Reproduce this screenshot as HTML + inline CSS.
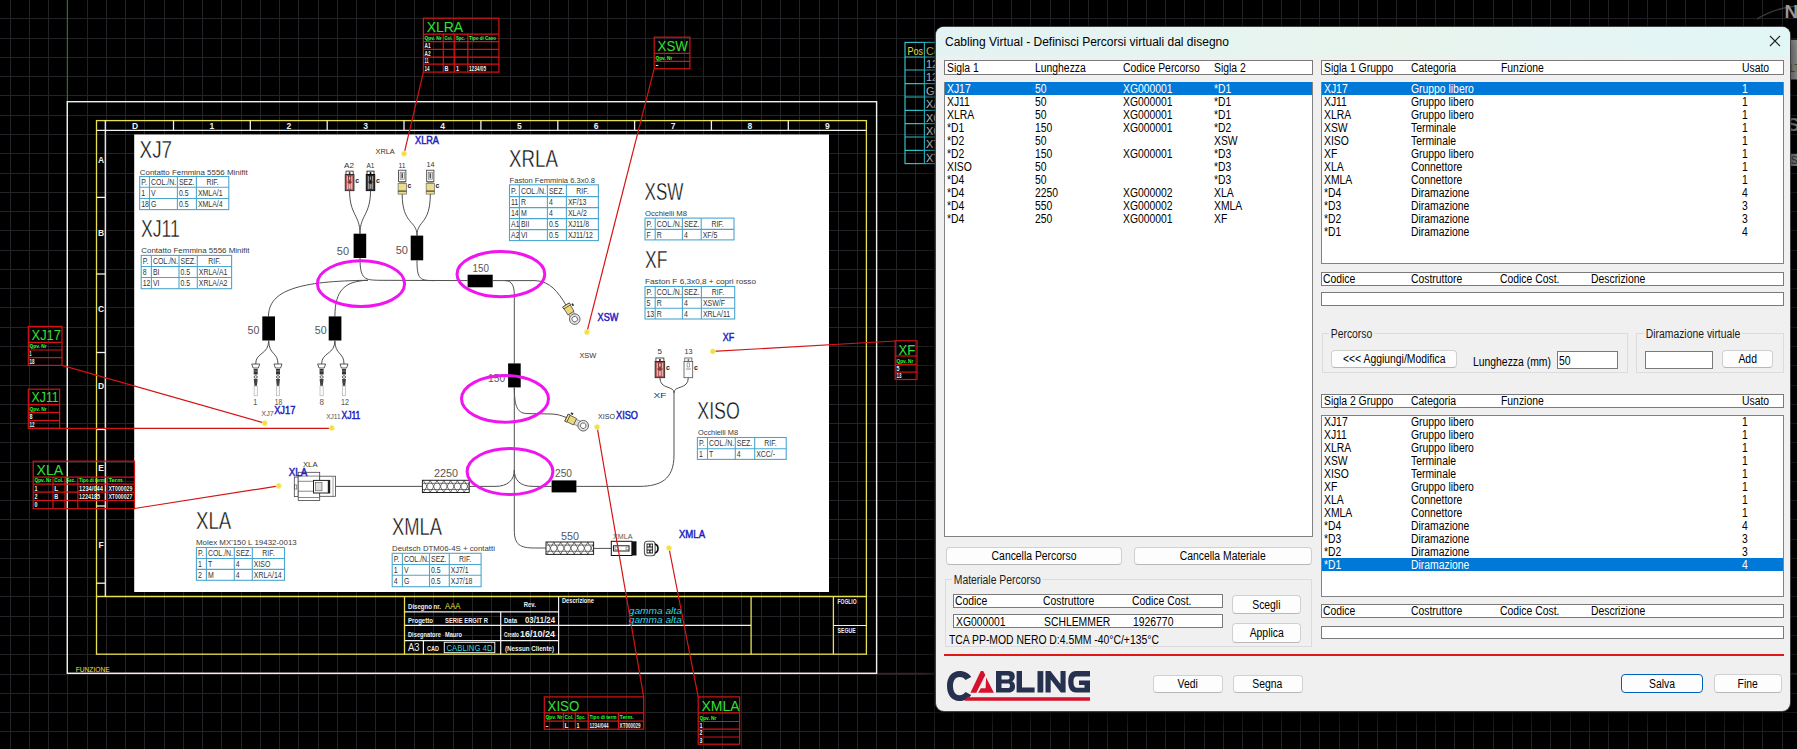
<!DOCTYPE html>
<html><head><meta charset="utf-8"><style>
html,body{margin:0;padding:0;width:1797px;height:749px;overflow:hidden;background:#000;position:relative}

.abs{position:absolute}
.dlg{position:absolute;left:936px;top:27px;width:854px;height:684px;background:#f0f0f0;border-radius:8px;box-shadow:0 0 0 1px #404040,0 6px 18px 4px rgba(0,0,0,.75)}
.title{position:absolute;left:936px;top:27px;width:854px;height:32px;border-radius:8px 8px 0 0;background:linear-gradient(90deg,#e3f3f3 0%,#e6f4f1 30%,#e9f4ed 55%,#e5f5f3 75%,#e1f6f6 100%)}
.title:after{content:'';position:absolute;left:0;right:0;bottom:0;height:4px;background:linear-gradient(180deg,rgba(240,240,240,0),#f0f0f0)}
.t,.tw{position:absolute;font-family:"Liberation Sans",sans-serif;font-size:12px;line-height:14px;white-space:nowrap;color:#000;transform:scaleX(.865);transform-origin:0 0}
.ttl{transform:none}
.tw{color:#fff}
.lbl{background:#f0f0f0;padding:0 2px;color:#1a1a1a}
.hdr,.lst,.edit{position:absolute;box-sizing:border-box;background:#fff;border:1px solid #7a7a7a}
.lst{border-color:#828282}
.sel{position:absolute;background:#0078d7}
.grp{position:absolute;box-sizing:border-box;border:1px solid #dcdcdc}
.btn{position:absolute;box-sizing:border-box;background:#fdfdfd;border:1px solid #d0d0d0;border-bottom-color:#b8b8b8;border-radius:4px;font-family:"Liberation Sans",sans-serif;font-size:12px;color:#000;display:flex;align-items:center;justify-content:center;white-space:nowrap}
.btn span{position:relative;top:0px;display:inline-block;transform:scaleX(.865)}
.def{border:1.5px solid #005fb8}
.redl{position:absolute;left:944px;top:654px;width:840px;height:2px;background:#e01818}

</style></head><body>
<svg width="1797" height="749" viewBox="0 0 1797 749" style="position:absolute;left:0;top:0"><line x1="10.5" y1="0.0" x2="10.5" y2="749.0" stroke="#232327" stroke-width="1" shape-rendering="crispEdges"/>
<line x1="29.5" y1="0.0" x2="29.5" y2="749.0" stroke="#232327" stroke-width="1" shape-rendering="crispEdges"/>
<line x1="48.5" y1="0.0" x2="48.5" y2="749.0" stroke="#232327" stroke-width="1" shape-rendering="crispEdges"/>
<line x1="67.5" y1="0.0" x2="67.5" y2="749.0" stroke="#232327" stroke-width="1" shape-rendering="crispEdges"/>
<line x1="87.5" y1="0.0" x2="87.5" y2="749.0" stroke="#232327" stroke-width="1" shape-rendering="crispEdges"/>
<line x1="106.5" y1="0.0" x2="106.5" y2="749.0" stroke="#232327" stroke-width="1" shape-rendering="crispEdges"/>
<line x1="125.5" y1="0.0" x2="125.5" y2="749.0" stroke="#232327" stroke-width="1" shape-rendering="crispEdges"/>
<line x1="144.5" y1="0.0" x2="144.5" y2="749.0" stroke="#232327" stroke-width="1" shape-rendering="crispEdges"/>
<line x1="164.5" y1="0.0" x2="164.5" y2="749.0" stroke="#232327" stroke-width="1" shape-rendering="crispEdges"/>
<line x1="183.5" y1="0.0" x2="183.5" y2="749.0" stroke="#232327" stroke-width="1" shape-rendering="crispEdges"/>
<line x1="202.5" y1="0.0" x2="202.5" y2="749.0" stroke="#232327" stroke-width="1" shape-rendering="crispEdges"/>
<line x1="221.5" y1="0.0" x2="221.5" y2="749.0" stroke="#232327" stroke-width="1" shape-rendering="crispEdges"/>
<line x1="241.5" y1="0.0" x2="241.5" y2="749.0" stroke="#232327" stroke-width="1" shape-rendering="crispEdges"/>
<line x1="260.5" y1="0.0" x2="260.5" y2="749.0" stroke="#232327" stroke-width="1" shape-rendering="crispEdges"/>
<line x1="279.5" y1="0.0" x2="279.5" y2="749.0" stroke="#232327" stroke-width="1" shape-rendering="crispEdges"/>
<line x1="298.5" y1="0.0" x2="298.5" y2="749.0" stroke="#232327" stroke-width="1" shape-rendering="crispEdges"/>
<line x1="318.5" y1="0.0" x2="318.5" y2="749.0" stroke="#232327" stroke-width="1" shape-rendering="crispEdges"/>
<line x1="337.5" y1="0.0" x2="337.5" y2="749.0" stroke="#232327" stroke-width="1" shape-rendering="crispEdges"/>
<line x1="356.5" y1="0.0" x2="356.5" y2="749.0" stroke="#232327" stroke-width="1" shape-rendering="crispEdges"/>
<line x1="375.5" y1="0.0" x2="375.5" y2="749.0" stroke="#232327" stroke-width="1" shape-rendering="crispEdges"/>
<line x1="395.5" y1="0.0" x2="395.5" y2="749.0" stroke="#232327" stroke-width="1" shape-rendering="crispEdges"/>
<line x1="414.5" y1="0.0" x2="414.5" y2="749.0" stroke="#232327" stroke-width="1" shape-rendering="crispEdges"/>
<line x1="433.5" y1="0.0" x2="433.5" y2="749.0" stroke="#232327" stroke-width="1" shape-rendering="crispEdges"/>
<line x1="453.5" y1="0.0" x2="453.5" y2="749.0" stroke="#232327" stroke-width="1" shape-rendering="crispEdges"/>
<line x1="472.5" y1="0.0" x2="472.5" y2="749.0" stroke="#232327" stroke-width="1" shape-rendering="crispEdges"/>
<line x1="491.5" y1="0.0" x2="491.5" y2="749.0" stroke="#232327" stroke-width="1" shape-rendering="crispEdges"/>
<line x1="510.5" y1="0.0" x2="510.5" y2="749.0" stroke="#232327" stroke-width="1" shape-rendering="crispEdges"/>
<line x1="530.5" y1="0.0" x2="530.5" y2="749.0" stroke="#232327" stroke-width="1" shape-rendering="crispEdges"/>
<line x1="549.5" y1="0.0" x2="549.5" y2="749.0" stroke="#232327" stroke-width="1" shape-rendering="crispEdges"/>
<line x1="568.5" y1="0.0" x2="568.5" y2="749.0" stroke="#232327" stroke-width="1" shape-rendering="crispEdges"/>
<line x1="587.5" y1="0.0" x2="587.5" y2="749.0" stroke="#232327" stroke-width="1" shape-rendering="crispEdges"/>
<line x1="607.5" y1="0.0" x2="607.5" y2="749.0" stroke="#232327" stroke-width="1" shape-rendering="crispEdges"/>
<line x1="626.5" y1="0.0" x2="626.5" y2="749.0" stroke="#232327" stroke-width="1" shape-rendering="crispEdges"/>
<line x1="645.5" y1="0.0" x2="645.5" y2="749.0" stroke="#232327" stroke-width="1" shape-rendering="crispEdges"/>
<line x1="664.5" y1="0.0" x2="664.5" y2="749.0" stroke="#232327" stroke-width="1" shape-rendering="crispEdges"/>
<line x1="684.5" y1="0.0" x2="684.5" y2="749.0" stroke="#232327" stroke-width="1" shape-rendering="crispEdges"/>
<line x1="703.5" y1="0.0" x2="703.5" y2="749.0" stroke="#232327" stroke-width="1" shape-rendering="crispEdges"/>
<line x1="722.5" y1="0.0" x2="722.5" y2="749.0" stroke="#232327" stroke-width="1" shape-rendering="crispEdges"/>
<line x1="741.5" y1="0.0" x2="741.5" y2="749.0" stroke="#232327" stroke-width="1" shape-rendering="crispEdges"/>
<line x1="761.5" y1="0.0" x2="761.5" y2="749.0" stroke="#232327" stroke-width="1" shape-rendering="crispEdges"/>
<line x1="780.5" y1="0.0" x2="780.5" y2="749.0" stroke="#232327" stroke-width="1" shape-rendering="crispEdges"/>
<line x1="799.5" y1="0.0" x2="799.5" y2="749.0" stroke="#232327" stroke-width="1" shape-rendering="crispEdges"/>
<line x1="819.5" y1="0.0" x2="819.5" y2="749.0" stroke="#232327" stroke-width="1" shape-rendering="crispEdges"/>
<line x1="838.5" y1="0.0" x2="838.5" y2="749.0" stroke="#232327" stroke-width="1" shape-rendering="crispEdges"/>
<line x1="857.5" y1="0.0" x2="857.5" y2="749.0" stroke="#232327" stroke-width="1" shape-rendering="crispEdges"/>
<line x1="876.5" y1="0.0" x2="876.5" y2="749.0" stroke="#232327" stroke-width="1" shape-rendering="crispEdges"/>
<line x1="896.5" y1="0.0" x2="896.5" y2="749.0" stroke="#232327" stroke-width="1" shape-rendering="crispEdges"/>
<line x1="915.5" y1="0.0" x2="915.5" y2="749.0" stroke="#232327" stroke-width="1" shape-rendering="crispEdges"/>
<line x1="934.5" y1="0.0" x2="934.5" y2="749.0" stroke="#232327" stroke-width="1" shape-rendering="crispEdges"/>
<line x1="953.5" y1="0.0" x2="953.5" y2="749.0" stroke="#232327" stroke-width="1" shape-rendering="crispEdges"/>
<line x1="973.5" y1="0.0" x2="973.5" y2="749.0" stroke="#232327" stroke-width="1" shape-rendering="crispEdges"/>
<line x1="992.5" y1="0.0" x2="992.5" y2="749.0" stroke="#232327" stroke-width="1" shape-rendering="crispEdges"/>
<line x1="1011.5" y1="0.0" x2="1011.5" y2="749.0" stroke="#232327" stroke-width="1" shape-rendering="crispEdges"/>
<line x1="1030.5" y1="0.0" x2="1030.5" y2="749.0" stroke="#232327" stroke-width="1" shape-rendering="crispEdges"/>
<line x1="1050.5" y1="0.0" x2="1050.5" y2="749.0" stroke="#232327" stroke-width="1" shape-rendering="crispEdges"/>
<line x1="1069.5" y1="0.0" x2="1069.5" y2="749.0" stroke="#232327" stroke-width="1" shape-rendering="crispEdges"/>
<line x1="1088.5" y1="0.0" x2="1088.5" y2="749.0" stroke="#232327" stroke-width="1" shape-rendering="crispEdges"/>
<line x1="1107.5" y1="0.0" x2="1107.5" y2="749.0" stroke="#232327" stroke-width="1" shape-rendering="crispEdges"/>
<line x1="1127.5" y1="0.0" x2="1127.5" y2="749.0" stroke="#232327" stroke-width="1" shape-rendering="crispEdges"/>
<line x1="1146.5" y1="0.0" x2="1146.5" y2="749.0" stroke="#232327" stroke-width="1" shape-rendering="crispEdges"/>
<line x1="1165.5" y1="0.0" x2="1165.5" y2="749.0" stroke="#232327" stroke-width="1" shape-rendering="crispEdges"/>
<line x1="1184.5" y1="0.0" x2="1184.5" y2="749.0" stroke="#232327" stroke-width="1" shape-rendering="crispEdges"/>
<line x1="1204.5" y1="0.0" x2="1204.5" y2="749.0" stroke="#232327" stroke-width="1" shape-rendering="crispEdges"/>
<line x1="1223.5" y1="0.0" x2="1223.5" y2="749.0" stroke="#232327" stroke-width="1" shape-rendering="crispEdges"/>
<line x1="1242.5" y1="0.0" x2="1242.5" y2="749.0" stroke="#232327" stroke-width="1" shape-rendering="crispEdges"/>
<line x1="1262.5" y1="0.0" x2="1262.5" y2="749.0" stroke="#232327" stroke-width="1" shape-rendering="crispEdges"/>
<line x1="1281.5" y1="0.0" x2="1281.5" y2="749.0" stroke="#232327" stroke-width="1" shape-rendering="crispEdges"/>
<line x1="1300.5" y1="0.0" x2="1300.5" y2="749.0" stroke="#232327" stroke-width="1" shape-rendering="crispEdges"/>
<line x1="1319.5" y1="0.0" x2="1319.5" y2="749.0" stroke="#232327" stroke-width="1" shape-rendering="crispEdges"/>
<line x1="1339.5" y1="0.0" x2="1339.5" y2="749.0" stroke="#232327" stroke-width="1" shape-rendering="crispEdges"/>
<line x1="1358.5" y1="0.0" x2="1358.5" y2="749.0" stroke="#232327" stroke-width="1" shape-rendering="crispEdges"/>
<line x1="1377.5" y1="0.0" x2="1377.5" y2="749.0" stroke="#232327" stroke-width="1" shape-rendering="crispEdges"/>
<line x1="1396.5" y1="0.0" x2="1396.5" y2="749.0" stroke="#232327" stroke-width="1" shape-rendering="crispEdges"/>
<line x1="1416.5" y1="0.0" x2="1416.5" y2="749.0" stroke="#232327" stroke-width="1" shape-rendering="crispEdges"/>
<line x1="1435.5" y1="0.0" x2="1435.5" y2="749.0" stroke="#232327" stroke-width="1" shape-rendering="crispEdges"/>
<line x1="1454.5" y1="0.0" x2="1454.5" y2="749.0" stroke="#232327" stroke-width="1" shape-rendering="crispEdges"/>
<line x1="1473.5" y1="0.0" x2="1473.5" y2="749.0" stroke="#232327" stroke-width="1" shape-rendering="crispEdges"/>
<line x1="1493.5" y1="0.0" x2="1493.5" y2="749.0" stroke="#232327" stroke-width="1" shape-rendering="crispEdges"/>
<line x1="1512.5" y1="0.0" x2="1512.5" y2="749.0" stroke="#232327" stroke-width="1" shape-rendering="crispEdges"/>
<line x1="1531.5" y1="0.0" x2="1531.5" y2="749.0" stroke="#232327" stroke-width="1" shape-rendering="crispEdges"/>
<line x1="1550.5" y1="0.0" x2="1550.5" y2="749.0" stroke="#232327" stroke-width="1" shape-rendering="crispEdges"/>
<line x1="1570.5" y1="0.0" x2="1570.5" y2="749.0" stroke="#232327" stroke-width="1" shape-rendering="crispEdges"/>
<line x1="1589.5" y1="0.0" x2="1589.5" y2="749.0" stroke="#232327" stroke-width="1" shape-rendering="crispEdges"/>
<line x1="1608.5" y1="0.0" x2="1608.5" y2="749.0" stroke="#232327" stroke-width="1" shape-rendering="crispEdges"/>
<line x1="1628.5" y1="0.0" x2="1628.5" y2="749.0" stroke="#232327" stroke-width="1" shape-rendering="crispEdges"/>
<line x1="1647.5" y1="0.0" x2="1647.5" y2="749.0" stroke="#232327" stroke-width="1" shape-rendering="crispEdges"/>
<line x1="1666.5" y1="0.0" x2="1666.5" y2="749.0" stroke="#232327" stroke-width="1" shape-rendering="crispEdges"/>
<line x1="1685.5" y1="0.0" x2="1685.5" y2="749.0" stroke="#232327" stroke-width="1" shape-rendering="crispEdges"/>
<line x1="1705.5" y1="0.0" x2="1705.5" y2="749.0" stroke="#232327" stroke-width="1" shape-rendering="crispEdges"/>
<line x1="1724.5" y1="0.0" x2="1724.5" y2="749.0" stroke="#232327" stroke-width="1" shape-rendering="crispEdges"/>
<line x1="1743.5" y1="0.0" x2="1743.5" y2="749.0" stroke="#232327" stroke-width="1" shape-rendering="crispEdges"/>
<line x1="1762.5" y1="0.0" x2="1762.5" y2="749.0" stroke="#232327" stroke-width="1" shape-rendering="crispEdges"/>
<line x1="1782.5" y1="0.0" x2="1782.5" y2="749.0" stroke="#232327" stroke-width="1" shape-rendering="crispEdges"/>
<line x1="0.0" y1="18.5" x2="1797.0" y2="18.5" stroke="#232327" stroke-width="1" shape-rendering="crispEdges"/>
<line x1="0.0" y1="38.5" x2="1797.0" y2="38.5" stroke="#232327" stroke-width="1" shape-rendering="crispEdges"/>
<line x1="0.0" y1="57.5" x2="1797.0" y2="57.5" stroke="#232327" stroke-width="1" shape-rendering="crispEdges"/>
<line x1="0.0" y1="76.5" x2="1797.0" y2="76.5" stroke="#232327" stroke-width="1" shape-rendering="crispEdges"/>
<line x1="0.0" y1="95.5" x2="1797.0" y2="95.5" stroke="#232327" stroke-width="1" shape-rendering="crispEdges"/>
<line x1="0.0" y1="115.5" x2="1797.0" y2="115.5" stroke="#232327" stroke-width="1" shape-rendering="crispEdges"/>
<line x1="0.0" y1="134.5" x2="1797.0" y2="134.5" stroke="#232327" stroke-width="1" shape-rendering="crispEdges"/>
<line x1="0.0" y1="153.5" x2="1797.0" y2="153.5" stroke="#232327" stroke-width="1" shape-rendering="crispEdges"/>
<line x1="0.0" y1="173.5" x2="1797.0" y2="173.5" stroke="#232327" stroke-width="1" shape-rendering="crispEdges"/>
<line x1="0.0" y1="192.5" x2="1797.0" y2="192.5" stroke="#232327" stroke-width="1" shape-rendering="crispEdges"/>
<line x1="0.0" y1="211.5" x2="1797.0" y2="211.5" stroke="#232327" stroke-width="1" shape-rendering="crispEdges"/>
<line x1="0.0" y1="230.5" x2="1797.0" y2="230.5" stroke="#232327" stroke-width="1" shape-rendering="crispEdges"/>
<line x1="0.0" y1="250.5" x2="1797.0" y2="250.5" stroke="#232327" stroke-width="1" shape-rendering="crispEdges"/>
<line x1="0.0" y1="269.5" x2="1797.0" y2="269.5" stroke="#232327" stroke-width="1" shape-rendering="crispEdges"/>
<line x1="0.0" y1="288.5" x2="1797.0" y2="288.5" stroke="#232327" stroke-width="1" shape-rendering="crispEdges"/>
<line x1="0.0" y1="307.5" x2="1797.0" y2="307.5" stroke="#232327" stroke-width="1" shape-rendering="crispEdges"/>
<line x1="0.0" y1="327.5" x2="1797.0" y2="327.5" stroke="#232327" stroke-width="1" shape-rendering="crispEdges"/>
<line x1="0.0" y1="346.5" x2="1797.0" y2="346.5" stroke="#232327" stroke-width="1" shape-rendering="crispEdges"/>
<line x1="0.0" y1="365.5" x2="1797.0" y2="365.5" stroke="#232327" stroke-width="1" shape-rendering="crispEdges"/>
<line x1="0.0" y1="385.5" x2="1797.0" y2="385.5" stroke="#232327" stroke-width="1" shape-rendering="crispEdges"/>
<line x1="0.0" y1="404.5" x2="1797.0" y2="404.5" stroke="#232327" stroke-width="1" shape-rendering="crispEdges"/>
<line x1="0.0" y1="423.5" x2="1797.0" y2="423.5" stroke="#232327" stroke-width="1" shape-rendering="crispEdges"/>
<line x1="0.0" y1="442.5" x2="1797.0" y2="442.5" stroke="#232327" stroke-width="1" shape-rendering="crispEdges"/>
<line x1="0.0" y1="462.5" x2="1797.0" y2="462.5" stroke="#232327" stroke-width="1" shape-rendering="crispEdges"/>
<line x1="0.0" y1="481.5" x2="1797.0" y2="481.5" stroke="#232327" stroke-width="1" shape-rendering="crispEdges"/>
<line x1="0.0" y1="500.5" x2="1797.0" y2="500.5" stroke="#232327" stroke-width="1" shape-rendering="crispEdges"/>
<line x1="0.0" y1="519.5" x2="1797.0" y2="519.5" stroke="#232327" stroke-width="1" shape-rendering="crispEdges"/>
<line x1="0.0" y1="539.5" x2="1797.0" y2="539.5" stroke="#232327" stroke-width="1" shape-rendering="crispEdges"/>
<line x1="0.0" y1="558.5" x2="1797.0" y2="558.5" stroke="#232327" stroke-width="1" shape-rendering="crispEdges"/>
<line x1="0.0" y1="577.5" x2="1797.0" y2="577.5" stroke="#232327" stroke-width="1" shape-rendering="crispEdges"/>
<line x1="0.0" y1="596.5" x2="1797.0" y2="596.5" stroke="#232327" stroke-width="1" shape-rendering="crispEdges"/>
<line x1="0.0" y1="616.5" x2="1797.0" y2="616.5" stroke="#232327" stroke-width="1" shape-rendering="crispEdges"/>
<line x1="0.0" y1="635.5" x2="1797.0" y2="635.5" stroke="#232327" stroke-width="1" shape-rendering="crispEdges"/>
<line x1="0.0" y1="654.5" x2="1797.0" y2="654.5" stroke="#232327" stroke-width="1" shape-rendering="crispEdges"/>
<line x1="0.0" y1="674.5" x2="1797.0" y2="674.5" stroke="#232327" stroke-width="1" shape-rendering="crispEdges"/>
<line x1="0.0" y1="693.5" x2="1797.0" y2="693.5" stroke="#232327" stroke-width="1" shape-rendering="crispEdges"/>
<line x1="0.0" y1="712.5" x2="1797.0" y2="712.5" stroke="#232327" stroke-width="1" shape-rendering="crispEdges"/>
<line x1="0.0" y1="731.5" x2="1797.0" y2="731.5" stroke="#232327" stroke-width="1" shape-rendering="crispEdges"/>
<line x1="67.3" y1="0.0" x2="67.3" y2="673.3" stroke="#3a7a3a" stroke-width="1" />
<line x1="67.3" y1="673.3" x2="1797.0" y2="673.3" stroke="#6a2020" stroke-width="1" />
<rect x="67.3" y="101.7" width="809.3" height="571.6" fill="none" stroke="#f0f0f0" stroke-width="1.4" />
<rect x="96.5" y="120.6" width="769.9" height="533.6" fill="none" stroke="#e8e050" stroke-width="1.3" />
<line x1="96.5" y1="596.5" x2="866.4" y2="596.5" stroke="#e8e050" stroke-width="1.3" />
<line x1="96.5" y1="130.3" x2="866.4" y2="130.3" stroke="#f0f0f0" stroke-width="1.3" />
<line x1="105.3" y1="120.6" x2="105.3" y2="596.5" stroke="#f0f0f0" stroke-width="1.3" />
<line x1="173.5" y1="120.6" x2="173.5" y2="130.3" stroke="#f0f0f0" stroke-width="1.3" />
<line x1="250.3" y1="120.6" x2="250.3" y2="130.3" stroke="#f0f0f0" stroke-width="1.3" />
<line x1="327.2" y1="120.6" x2="327.2" y2="130.3" stroke="#f0f0f0" stroke-width="1.3" />
<line x1="404.0" y1="120.6" x2="404.0" y2="130.3" stroke="#f0f0f0" stroke-width="1.3" />
<line x1="480.9" y1="120.6" x2="480.9" y2="130.3" stroke="#f0f0f0" stroke-width="1.3" />
<line x1="557.8" y1="120.6" x2="557.8" y2="130.3" stroke="#f0f0f0" stroke-width="1.3" />
<line x1="634.6" y1="120.6" x2="634.6" y2="130.3" stroke="#f0f0f0" stroke-width="1.3" />
<line x1="711.4" y1="120.6" x2="711.4" y2="130.3" stroke="#f0f0f0" stroke-width="1.3" />
<line x1="788.3" y1="120.6" x2="788.3" y2="130.3" stroke="#f0f0f0" stroke-width="1.3" />
<text x="135.0" y="128.6" font-family='"Liberation Sans", sans-serif' font-size="8.5" fill="#f0f0f0" font-weight="bold" text-anchor="middle" >D</text>
<text x="211.9" y="128.6" font-family='"Liberation Sans", sans-serif' font-size="8.5" fill="#f0f0f0" font-weight="bold" text-anchor="middle" >1</text>
<text x="288.8" y="128.6" font-family='"Liberation Sans", sans-serif' font-size="8.5" fill="#f0f0f0" font-weight="bold" text-anchor="middle" >2</text>
<text x="365.6" y="128.6" font-family='"Liberation Sans", sans-serif' font-size="8.5" fill="#f0f0f0" font-weight="bold" text-anchor="middle" >3</text>
<text x="442.5" y="128.6" font-family='"Liberation Sans", sans-serif' font-size="8.5" fill="#f0f0f0" font-weight="bold" text-anchor="middle" >4</text>
<text x="519.3" y="128.6" font-family='"Liberation Sans", sans-serif' font-size="8.5" fill="#f0f0f0" font-weight="bold" text-anchor="middle" >5</text>
<text x="596.2" y="128.6" font-family='"Liberation Sans", sans-serif' font-size="8.5" fill="#f0f0f0" font-weight="bold" text-anchor="middle" >6</text>
<text x="673.0" y="128.6" font-family='"Liberation Sans", sans-serif' font-size="8.5" fill="#f0f0f0" font-weight="bold" text-anchor="middle" >7</text>
<text x="749.9" y="128.6" font-family='"Liberation Sans", sans-serif' font-size="8.5" fill="#f0f0f0" font-weight="bold" text-anchor="middle" >8</text>
<text x="827.3" y="128.6" font-family='"Liberation Sans", sans-serif' font-size="8.5" fill="#f0f0f0" font-weight="bold" text-anchor="middle" >9</text>
<line x1="96.5" y1="197.4" x2="105.3" y2="197.4" stroke="#f0f0f0" stroke-width="1.3" />
<line x1="96.5" y1="274.0" x2="105.3" y2="274.0" stroke="#f0f0f0" stroke-width="1.3" />
<line x1="96.5" y1="352.5" x2="105.3" y2="352.5" stroke="#f0f0f0" stroke-width="1.3" />
<line x1="96.5" y1="429.5" x2="105.3" y2="429.5" stroke="#f0f0f0" stroke-width="1.3" />
<line x1="96.5" y1="506.0" x2="105.3" y2="506.0" stroke="#f0f0f0" stroke-width="1.3" />
<line x1="96.5" y1="583.2" x2="105.3" y2="583.2" stroke="#f0f0f0" stroke-width="1.3" />
<text x="101.0" y="162.7" font-family='"Liberation Sans", sans-serif' font-size="8.5" fill="#f0f0f0" font-weight="bold" text-anchor="middle" >A</text>
<text x="101.0" y="236.2" font-family='"Liberation Sans", sans-serif' font-size="8.5" fill="#f0f0f0" font-weight="bold" text-anchor="middle" >B</text>
<text x="101.0" y="312.2" font-family='"Liberation Sans", sans-serif' font-size="8.5" fill="#f0f0f0" font-weight="bold" text-anchor="middle" >C</text>
<text x="101.0" y="389.2" font-family='"Liberation Sans", sans-serif' font-size="8.5" fill="#f0f0f0" font-weight="bold" text-anchor="middle" >D</text>
<text x="101.0" y="471.2" font-family='"Liberation Sans", sans-serif' font-size="8.5" fill="#f0f0f0" font-weight="bold" text-anchor="middle" >E</text>
<text x="101.0" y="548.2" font-family='"Liberation Sans", sans-serif' font-size="8.5" fill="#f0f0f0" font-weight="bold" text-anchor="middle" >F</text>
<text x="75.7" y="672.3" font-family='"Liberation Sans", sans-serif' font-size="7.5" fill="#e8e050" font-weight="normal" text-anchor="start" textLength="34.0" lengthAdjust="spacingAndGlyphs" >FUNZIONE</text>
<rect x="134.2" y="134.5" width="694.8" height="457.5" fill="#ffffff" />
<line x1="404.5" y1="596.5" x2="404.5" y2="654.2" stroke="#e8e050" stroke-width="1.3" />
<line x1="751.1" y1="596.5" x2="751.1" y2="654.2" stroke="#e8e050" stroke-width="1.3" />
<line x1="833.4" y1="596.5" x2="833.4" y2="654.2" stroke="#e8e050" stroke-width="1.3" />
<line x1="404.5" y1="611.8" x2="558.6" y2="611.8" stroke="#f0f0f0" stroke-width="1.2" />
<line x1="404.5" y1="625.4" x2="751.1" y2="625.4" stroke="#f0f0f0" stroke-width="1.2" />
<line x1="404.5" y1="640.7" x2="558.6" y2="640.7" stroke="#f0f0f0" stroke-width="1.2" />
<line x1="500.7" y1="611.8" x2="500.7" y2="654.2" stroke="#f0f0f0" stroke-width="1.2" />
<line x1="558.6" y1="596.5" x2="558.6" y2="654.2" stroke="#f0f0f0" stroke-width="1.2" />
<line x1="423.4" y1="640.7" x2="423.4" y2="654.2" stroke="#f0f0f0" stroke-width="1.2" />
<line x1="833.4" y1="625.5" x2="866.4" y2="625.5" stroke="#f0f0f0" stroke-width="1.2" />
<text x="408.0" y="609.3" font-family='"Liberation Sans", sans-serif' font-size="7" fill="#f0f0f0" font-weight="bold" text-anchor="start" textLength="33.0" lengthAdjust="spacingAndGlyphs" >Disegno nr.</text>
<text x="445.0" y="609.3" font-family='"Liberation Sans", sans-serif' font-size="9.5" fill="#e8e050" font-weight="normal" text-anchor="start" textLength="15.5" lengthAdjust="spacingAndGlyphs" >AAA</text>
<text x="523.8" y="607.0" font-family='"Liberation Sans", sans-serif' font-size="7" fill="#f0f0f0" font-weight="bold" text-anchor="start" textLength="12.0" lengthAdjust="spacingAndGlyphs" >Rev.</text>
<text x="408.0" y="622.6" font-family='"Liberation Sans", sans-serif' font-size="7" fill="#f0f0f0" font-weight="bold" text-anchor="start" textLength="25.0" lengthAdjust="spacingAndGlyphs" >Progetto</text>
<text x="445.0" y="622.6" font-family='"Liberation Sans", sans-serif' font-size="8" fill="#f0f0f0" font-weight="bold" text-anchor="start" textLength="43.0" lengthAdjust="spacingAndGlyphs" >SERIE ERGIT R</text>
<text x="504.0" y="622.6" font-family='"Liberation Sans", sans-serif' font-size="7" fill="#f0f0f0" font-weight="bold" text-anchor="start" textLength="13.0" lengthAdjust="spacingAndGlyphs" >Data</text>
<text x="525.0" y="622.6" font-family='"Liberation Sans", sans-serif' font-size="9" fill="#f0f0f0" font-weight="bold" text-anchor="start" textLength="30.0" lengthAdjust="spacingAndGlyphs" >03/11/24</text>
<text x="408.0" y="636.8" font-family='"Liberation Sans", sans-serif' font-size="7" fill="#f0f0f0" font-weight="bold" text-anchor="start" textLength="33.0" lengthAdjust="spacingAndGlyphs" >Disegnatore</text>
<text x="445.0" y="636.8" font-family='"Liberation Sans", sans-serif' font-size="8" fill="#f0f0f0" font-weight="bold" text-anchor="start" textLength="17.0" lengthAdjust="spacingAndGlyphs" >Mauro</text>
<text x="504.0" y="636.8" font-family='"Liberation Sans", sans-serif' font-size="7" fill="#f0f0f0" font-weight="bold" text-anchor="start" textLength="15.0" lengthAdjust="spacingAndGlyphs" >Creato</text>
<text x="520.0" y="636.8" font-family='"Liberation Sans", sans-serif' font-size="9" fill="#f0f0f0" font-weight="bold" text-anchor="start" textLength="35.0" lengthAdjust="spacingAndGlyphs" >16/10/24</text>
<text x="408.0" y="650.8" font-family='"Liberation Sans", sans-serif' font-size="10" fill="#f0f0f0" font-weight="normal" text-anchor="start" textLength="11.5" lengthAdjust="spacingAndGlyphs" >A3</text>
<text x="427.0" y="651.0" font-family='"Liberation Sans", sans-serif' font-size="6.5" fill="#f0f0f0" font-weight="bold" text-anchor="start" textLength="12.0" lengthAdjust="spacingAndGlyphs" >CAD</text>
<rect x="444.3" y="642.3" width="50.5" height="10.4" fill="none" stroke="#f0f0f0" stroke-width="1" />
<text x="446.5" y="651.2" font-family='"Liberation Sans", sans-serif' font-size="9" fill="#30d8e0" font-weight="normal" text-anchor="start" textLength="46.0" lengthAdjust="spacingAndGlyphs" >CABLING 4D</text>
<text x="505.0" y="650.5" font-family='"Liberation Sans", sans-serif' font-size="8" fill="#f0f0f0" font-weight="bold" text-anchor="start" textLength="49.0" lengthAdjust="spacingAndGlyphs" >(Nessun Cliente)</text>
<text x="562.0" y="602.5" font-family='"Liberation Sans", sans-serif' font-size="6.5" fill="#f0f0f0" font-weight="bold" text-anchor="start" textLength="32.0" lengthAdjust="spacingAndGlyphs" >Descrizione</text>
<text x="628.8" y="613.8" font-family='"Liberation Sans", sans-serif' font-size="9" fill="#30d8e0" font-weight="normal" text-anchor="start" textLength="53.0" lengthAdjust="spacingAndGlyphs" font-style="italic">gamma  alta</text>
<text x="628.8" y="622.7" font-family='"Liberation Sans", sans-serif' font-size="9" fill="#30d8e0" font-weight="normal" text-anchor="start" textLength="53.0" lengthAdjust="spacingAndGlyphs" font-style="italic">gamma  alta</text>
<text x="837.6" y="603.7" font-family='"Liberation Sans", sans-serif' font-size="6.5" fill="#f0f0f0" font-weight="bold" text-anchor="start" textLength="19.0" lengthAdjust="spacingAndGlyphs" >FOGLIO</text>
<text x="837.6" y="632.8" font-family='"Liberation Sans", sans-serif' font-size="6.5" fill="#f0f0f0" font-weight="bold" text-anchor="start" textLength="18.0" lengthAdjust="spacingAndGlyphs" >SEGUE</text>
<text x="139.6" y="158.4" font-family='"Liberation Sans", sans-serif' font-size="23" fill="#111111" font-weight="normal" text-anchor="start" textLength="32.4" lengthAdjust="spacingAndGlyphs" stroke="#fff" stroke-width="0.35">XJ7</text>
<text x="139.8" y="174.8" font-family='"Liberation Sans", sans-serif' font-size="8" fill="#3a3a3a" font-weight="normal" text-anchor="start" textLength="107.8" lengthAdjust="spacingAndGlyphs" >Contatto Femmina 5556 Minifit</text>
<rect x="139.7" y="176.5" width="89.1" height="33.1" fill="none" stroke="#4aa6d0" stroke-width="1.1" />
<line x1="149.5" y1="176.5" x2="149.5" y2="209.6" stroke="#4aa6d0" stroke-width="1.1" />
<line x1="177.4" y1="176.5" x2="177.4" y2="209.6" stroke="#4aa6d0" stroke-width="1.1" />
<line x1="196.4" y1="176.5" x2="196.4" y2="209.6" stroke="#4aa6d0" stroke-width="1.1" />
<line x1="139.7" y1="187.3" x2="228.8" y2="187.3" stroke="#4aa6d0" stroke-width="1.1" />
<line x1="139.7" y1="198.5" x2="228.8" y2="198.5" stroke="#4aa6d0" stroke-width="1.1" />
<text x="141.2" y="185.1" font-family='"Liberation Sans", sans-serif' font-size="8.2" fill="#333" font-weight="normal" text-anchor="start" transform-origin="141.2 187.3" transform="scale(0.85 1)">P.</text>
<text x="151.0" y="185.1" font-family='"Liberation Sans", sans-serif' font-size="8.2" fill="#333" font-weight="normal" text-anchor="start" transform-origin="151.0 187.3" transform="scale(0.85 1)">COL./N.</text>
<text x="178.9" y="185.1" font-family='"Liberation Sans", sans-serif' font-size="8.2" fill="#333" font-weight="normal" text-anchor="start" transform-origin="178.9 187.3" transform="scale(0.85 1)">SEZ.</text>
<text x="212.6" y="185.1" font-family='"Liberation Sans", sans-serif' font-size="8.2" fill="#333" font-weight="normal" text-anchor="middle" transform-origin="212.6 187.3" transform="scale(0.85 1)">RIF.</text>
<text x="141.2" y="196.3" font-family='"Liberation Sans", sans-serif' font-size="8.2" fill="#333" font-weight="normal" text-anchor="start" transform-origin="141.2 198.5" transform="scale(0.85 1)">1</text>
<text x="151.0" y="196.3" font-family='"Liberation Sans", sans-serif' font-size="8.2" fill="#333" font-weight="normal" text-anchor="start" transform-origin="151.0 198.5" transform="scale(0.85 1)">V</text>
<text x="178.9" y="196.3" font-family='"Liberation Sans", sans-serif' font-size="8.2" fill="#333" font-weight="normal" text-anchor="start" transform-origin="178.9 198.5" transform="scale(0.85 1)">0.5</text>
<text x="197.9" y="196.3" font-family='"Liberation Sans", sans-serif' font-size="8.2" fill="#333" font-weight="normal" text-anchor="start" transform-origin="197.9 198.5" transform="scale(0.85 1)">XMLA/1</text>
<text x="141.2" y="207.4" font-family='"Liberation Sans", sans-serif' font-size="8.2" fill="#333" font-weight="normal" text-anchor="start" transform-origin="141.2 209.6" transform="scale(0.85 1)">18</text>
<text x="151.0" y="207.4" font-family='"Liberation Sans", sans-serif' font-size="8.2" fill="#333" font-weight="normal" text-anchor="start" transform-origin="151.0 209.6" transform="scale(0.85 1)">G</text>
<text x="178.9" y="207.4" font-family='"Liberation Sans", sans-serif' font-size="8.2" fill="#333" font-weight="normal" text-anchor="start" transform-origin="178.9 209.6" transform="scale(0.85 1)">0.5</text>
<text x="197.9" y="207.4" font-family='"Liberation Sans", sans-serif' font-size="8.2" fill="#333" font-weight="normal" text-anchor="start" transform-origin="197.9 209.6" transform="scale(0.85 1)">XMLA/4</text>
<text x="141.0" y="237.4" font-family='"Liberation Sans", sans-serif' font-size="23" fill="#111111" font-weight="normal" text-anchor="start" textLength="38.9" lengthAdjust="spacingAndGlyphs" stroke="#fff" stroke-width="0.35">XJ11</text>
<text x="141.3" y="253.3" font-family='"Liberation Sans", sans-serif' font-size="8" fill="#3a3a3a" font-weight="normal" text-anchor="start" textLength="108.1" lengthAdjust="spacingAndGlyphs" >Contatto Femmina 5556 Minifit</text>
<rect x="141.2" y="255.4" width="90.4" height="33.3" fill="none" stroke="#4aa6d0" stroke-width="1.1" />
<line x1="151.4" y1="255.4" x2="151.4" y2="288.7" stroke="#4aa6d0" stroke-width="1.1" />
<line x1="179.0" y1="255.4" x2="179.0" y2="288.7" stroke="#4aa6d0" stroke-width="1.1" />
<line x1="197.3" y1="255.4" x2="197.3" y2="288.7" stroke="#4aa6d0" stroke-width="1.1" />
<line x1="141.2" y1="266.5" x2="231.6" y2="266.5" stroke="#4aa6d0" stroke-width="1.1" />
<line x1="141.2" y1="277.5" x2="231.6" y2="277.5" stroke="#4aa6d0" stroke-width="1.1" />
<text x="142.7" y="264.3" font-family='"Liberation Sans", sans-serif' font-size="8.2" fill="#333" font-weight="normal" text-anchor="start" transform-origin="142.7 266.5" transform="scale(0.85 1)">P.</text>
<text x="152.9" y="264.3" font-family='"Liberation Sans", sans-serif' font-size="8.2" fill="#333" font-weight="normal" text-anchor="start" transform-origin="152.9 266.5" transform="scale(0.85 1)">COL./N.</text>
<text x="180.5" y="264.3" font-family='"Liberation Sans", sans-serif' font-size="8.2" fill="#333" font-weight="normal" text-anchor="start" transform-origin="180.5 266.5" transform="scale(0.85 1)">SEZ.</text>
<text x="214.4" y="264.3" font-family='"Liberation Sans", sans-serif' font-size="8.2" fill="#333" font-weight="normal" text-anchor="middle" transform-origin="214.4 266.5" transform="scale(0.85 1)">RIF.</text>
<text x="142.7" y="275.3" font-family='"Liberation Sans", sans-serif' font-size="8.2" fill="#333" font-weight="normal" text-anchor="start" transform-origin="142.7 277.5" transform="scale(0.85 1)">8</text>
<text x="152.9" y="275.3" font-family='"Liberation Sans", sans-serif' font-size="8.2" fill="#333" font-weight="normal" text-anchor="start" transform-origin="152.9 277.5" transform="scale(0.85 1)">BI</text>
<text x="180.5" y="275.3" font-family='"Liberation Sans", sans-serif' font-size="8.2" fill="#333" font-weight="normal" text-anchor="start" transform-origin="180.5 277.5" transform="scale(0.85 1)">0.5</text>
<text x="198.8" y="275.3" font-family='"Liberation Sans", sans-serif' font-size="8.2" fill="#333" font-weight="normal" text-anchor="start" transform-origin="198.8 277.5" transform="scale(0.85 1)">XRLA/A1</text>
<text x="142.7" y="286.5" font-family='"Liberation Sans", sans-serif' font-size="8.2" fill="#333" font-weight="normal" text-anchor="start" transform-origin="142.7 288.7" transform="scale(0.85 1)">12</text>
<text x="152.9" y="286.5" font-family='"Liberation Sans", sans-serif' font-size="8.2" fill="#333" font-weight="normal" text-anchor="start" transform-origin="152.9 288.7" transform="scale(0.85 1)">VI</text>
<text x="180.5" y="286.5" font-family='"Liberation Sans", sans-serif' font-size="8.2" fill="#333" font-weight="normal" text-anchor="start" transform-origin="180.5 288.7" transform="scale(0.85 1)">0.5</text>
<text x="198.8" y="286.5" font-family='"Liberation Sans", sans-serif' font-size="8.2" fill="#333" font-weight="normal" text-anchor="start" transform-origin="198.8 288.7" transform="scale(0.85 1)">XRLA/A2</text>
<text x="509.1" y="167.2" font-family='"Liberation Sans", sans-serif' font-size="23" fill="#111111" font-weight="normal" text-anchor="start" textLength="48.9" lengthAdjust="spacingAndGlyphs" stroke="#fff" stroke-width="0.35">XRLA</text>
<text x="509.6" y="182.6" font-family='"Liberation Sans", sans-serif' font-size="8" fill="#3a3a3a" font-weight="normal" text-anchor="start" textLength="85.4" lengthAdjust="spacingAndGlyphs" >Faston Femminia 6.3x0.8</text>
<rect x="509.5" y="184.8" width="88.9" height="55.8" fill="none" stroke="#4aa6d0" stroke-width="1.1" />
<line x1="519.4" y1="184.8" x2="519.4" y2="240.6" stroke="#4aa6d0" stroke-width="1.1" />
<line x1="547.4" y1="184.8" x2="547.4" y2="240.6" stroke="#4aa6d0" stroke-width="1.1" />
<line x1="566.4" y1="184.8" x2="566.4" y2="240.6" stroke="#4aa6d0" stroke-width="1.1" />
<line x1="509.5" y1="196.6" x2="598.4" y2="196.6" stroke="#4aa6d0" stroke-width="1.1" />
<line x1="509.5" y1="207.6" x2="598.4" y2="207.6" stroke="#4aa6d0" stroke-width="1.1" />
<line x1="509.5" y1="218.6" x2="598.4" y2="218.6" stroke="#4aa6d0" stroke-width="1.1" />
<line x1="509.5" y1="229.6" x2="598.4" y2="229.6" stroke="#4aa6d0" stroke-width="1.1" />
<text x="511.0" y="194.4" font-family='"Liberation Sans", sans-serif' font-size="8.2" fill="#333" font-weight="normal" text-anchor="start" transform-origin="511.0 196.6" transform="scale(0.85 1)">P.</text>
<text x="520.9" y="194.4" font-family='"Liberation Sans", sans-serif' font-size="8.2" fill="#333" font-weight="normal" text-anchor="start" transform-origin="520.9 196.6" transform="scale(0.85 1)">COL./N.</text>
<text x="548.9" y="194.4" font-family='"Liberation Sans", sans-serif' font-size="8.2" fill="#333" font-weight="normal" text-anchor="start" transform-origin="548.9 196.6" transform="scale(0.85 1)">SEZ.</text>
<text x="582.4" y="194.4" font-family='"Liberation Sans", sans-serif' font-size="8.2" fill="#333" font-weight="normal" text-anchor="middle" transform-origin="582.4 196.6" transform="scale(0.85 1)">RIF.</text>
<text x="511.0" y="205.4" font-family='"Liberation Sans", sans-serif' font-size="8.2" fill="#333" font-weight="normal" text-anchor="start" transform-origin="511.0 207.6" transform="scale(0.85 1)">11</text>
<text x="520.9" y="205.4" font-family='"Liberation Sans", sans-serif' font-size="8.2" fill="#333" font-weight="normal" text-anchor="start" transform-origin="520.9 207.6" transform="scale(0.85 1)">R</text>
<text x="548.9" y="205.4" font-family='"Liberation Sans", sans-serif' font-size="8.2" fill="#333" font-weight="normal" text-anchor="start" transform-origin="548.9 207.6" transform="scale(0.85 1)">4</text>
<text x="567.9" y="205.4" font-family='"Liberation Sans", sans-serif' font-size="8.2" fill="#333" font-weight="normal" text-anchor="start" transform-origin="567.9 207.6" transform="scale(0.85 1)">XF/13</text>
<text x="511.0" y="216.4" font-family='"Liberation Sans", sans-serif' font-size="8.2" fill="#333" font-weight="normal" text-anchor="start" transform-origin="511.0 218.6" transform="scale(0.85 1)">14</text>
<text x="520.9" y="216.4" font-family='"Liberation Sans", sans-serif' font-size="8.2" fill="#333" font-weight="normal" text-anchor="start" transform-origin="520.9 218.6" transform="scale(0.85 1)">M</text>
<text x="548.9" y="216.4" font-family='"Liberation Sans", sans-serif' font-size="8.2" fill="#333" font-weight="normal" text-anchor="start" transform-origin="548.9 218.6" transform="scale(0.85 1)">4</text>
<text x="567.9" y="216.4" font-family='"Liberation Sans", sans-serif' font-size="8.2" fill="#333" font-weight="normal" text-anchor="start" transform-origin="567.9 218.6" transform="scale(0.85 1)">XLA/2</text>
<text x="511.0" y="227.4" font-family='"Liberation Sans", sans-serif' font-size="8.2" fill="#333" font-weight="normal" text-anchor="start" transform-origin="511.0 229.6" transform="scale(0.85 1)">A1</text>
<text x="520.9" y="227.4" font-family='"Liberation Sans", sans-serif' font-size="8.2" fill="#333" font-weight="normal" text-anchor="start" transform-origin="520.9 229.6" transform="scale(0.85 1)">BII</text>
<text x="548.9" y="227.4" font-family='"Liberation Sans", sans-serif' font-size="8.2" fill="#333" font-weight="normal" text-anchor="start" transform-origin="548.9 229.6" transform="scale(0.85 1)">0.5</text>
<text x="567.9" y="227.4" font-family='"Liberation Sans", sans-serif' font-size="8.2" fill="#333" font-weight="normal" text-anchor="start" transform-origin="567.9 229.6" transform="scale(0.85 1)">XJ11/8</text>
<text x="511.0" y="238.4" font-family='"Liberation Sans", sans-serif' font-size="8.2" fill="#333" font-weight="normal" text-anchor="start" transform-origin="511.0 240.6" transform="scale(0.85 1)">A2</text>
<text x="520.9" y="238.4" font-family='"Liberation Sans", sans-serif' font-size="8.2" fill="#333" font-weight="normal" text-anchor="start" transform-origin="520.9 240.6" transform="scale(0.85 1)">VI</text>
<text x="548.9" y="238.4" font-family='"Liberation Sans", sans-serif' font-size="8.2" fill="#333" font-weight="normal" text-anchor="start" transform-origin="548.9 240.6" transform="scale(0.85 1)">0.5</text>
<text x="567.9" y="238.4" font-family='"Liberation Sans", sans-serif' font-size="8.2" fill="#333" font-weight="normal" text-anchor="start" transform-origin="567.9 240.6" transform="scale(0.85 1)">XJ11/12</text>
<text x="644.5" y="199.9" font-family='"Liberation Sans", sans-serif' font-size="23" fill="#111111" font-weight="normal" text-anchor="start" textLength="38.9" lengthAdjust="spacingAndGlyphs" stroke="#fff" stroke-width="0.35">XSW</text>
<text x="645.0" y="216.0" font-family='"Liberation Sans", sans-serif' font-size="8" fill="#3a3a3a" font-weight="normal" text-anchor="start" textLength="42.0" lengthAdjust="spacingAndGlyphs" >Occhielli M8</text>
<rect x="645.0" y="218.1" width="89.0" height="21.8" fill="none" stroke="#4aa6d0" stroke-width="1.1" />
<line x1="655.2" y1="218.1" x2="655.2" y2="239.9" stroke="#4aa6d0" stroke-width="1.1" />
<line x1="682.4" y1="218.1" x2="682.4" y2="239.9" stroke="#4aa6d0" stroke-width="1.1" />
<line x1="701.2" y1="218.1" x2="701.2" y2="239.9" stroke="#4aa6d0" stroke-width="1.1" />
<line x1="645.0" y1="229.4" x2="734.0" y2="229.4" stroke="#4aa6d0" stroke-width="1.1" />
<text x="646.5" y="227.2" font-family='"Liberation Sans", sans-serif' font-size="8.2" fill="#333" font-weight="normal" text-anchor="start" transform-origin="646.5 229.4" transform="scale(0.85 1)">P.</text>
<text x="656.7" y="227.2" font-family='"Liberation Sans", sans-serif' font-size="8.2" fill="#333" font-weight="normal" text-anchor="start" transform-origin="656.7 229.4" transform="scale(0.85 1)">COL./N.</text>
<text x="683.9" y="227.2" font-family='"Liberation Sans", sans-serif' font-size="8.2" fill="#333" font-weight="normal" text-anchor="start" transform-origin="683.9 229.4" transform="scale(0.85 1)">SEZ.</text>
<text x="717.6" y="227.2" font-family='"Liberation Sans", sans-serif' font-size="8.2" fill="#333" font-weight="normal" text-anchor="middle" transform-origin="717.6 229.4" transform="scale(0.85 1)">RIF.</text>
<text x="646.5" y="237.7" font-family='"Liberation Sans", sans-serif' font-size="8.2" fill="#333" font-weight="normal" text-anchor="start" transform-origin="646.5 239.9" transform="scale(0.85 1)">F</text>
<text x="656.7" y="237.7" font-family='"Liberation Sans", sans-serif' font-size="8.2" fill="#333" font-weight="normal" text-anchor="start" transform-origin="656.7 239.9" transform="scale(0.85 1)">R</text>
<text x="683.9" y="237.7" font-family='"Liberation Sans", sans-serif' font-size="8.2" fill="#333" font-weight="normal" text-anchor="start" transform-origin="683.9 239.9" transform="scale(0.85 1)">4</text>
<text x="702.7" y="237.7" font-family='"Liberation Sans", sans-serif' font-size="8.2" fill="#333" font-weight="normal" text-anchor="start" transform-origin="702.7 239.9" transform="scale(0.85 1)">XF/5</text>
<text x="645.0" y="267.9" font-family='"Liberation Sans", sans-serif' font-size="23" fill="#111111" font-weight="normal" text-anchor="start" textLength="22.4" lengthAdjust="spacingAndGlyphs" stroke="#fff" stroke-width="0.35">XF</text>
<text x="645.0" y="284.3" font-family='"Liberation Sans", sans-serif' font-size="8" fill="#3a3a3a" font-weight="normal" text-anchor="start" textLength="111.0" lengthAdjust="spacingAndGlyphs" >Faston F 6,3x0,8 + copri rosso</text>
<rect x="645.0" y="286.5" width="89.7" height="32.5" fill="none" stroke="#4aa6d0" stroke-width="1.1" />
<line x1="655.2" y1="286.5" x2="655.2" y2="319.0" stroke="#4aa6d0" stroke-width="1.1" />
<line x1="682.4" y1="286.5" x2="682.4" y2="319.0" stroke="#4aa6d0" stroke-width="1.1" />
<line x1="701.4" y1="286.5" x2="701.4" y2="319.0" stroke="#4aa6d0" stroke-width="1.1" />
<line x1="645.0" y1="297.6" x2="734.7" y2="297.6" stroke="#4aa6d0" stroke-width="1.1" />
<line x1="645.0" y1="308.3" x2="734.7" y2="308.3" stroke="#4aa6d0" stroke-width="1.1" />
<text x="646.5" y="295.4" font-family='"Liberation Sans", sans-serif' font-size="8.2" fill="#333" font-weight="normal" text-anchor="start" transform-origin="646.5 297.6" transform="scale(0.85 1)">P.</text>
<text x="656.7" y="295.4" font-family='"Liberation Sans", sans-serif' font-size="8.2" fill="#333" font-weight="normal" text-anchor="start" transform-origin="656.7 297.6" transform="scale(0.85 1)">COL./N.</text>
<text x="683.9" y="295.4" font-family='"Liberation Sans", sans-serif' font-size="8.2" fill="#333" font-weight="normal" text-anchor="start" transform-origin="683.9 297.6" transform="scale(0.85 1)">SEZ.</text>
<text x="718.0" y="295.4" font-family='"Liberation Sans", sans-serif' font-size="8.2" fill="#333" font-weight="normal" text-anchor="middle" transform-origin="718.0 297.6" transform="scale(0.85 1)">RIF.</text>
<text x="646.5" y="306.1" font-family='"Liberation Sans", sans-serif' font-size="8.2" fill="#333" font-weight="normal" text-anchor="start" transform-origin="646.5 308.3" transform="scale(0.85 1)">5</text>
<text x="656.7" y="306.1" font-family='"Liberation Sans", sans-serif' font-size="8.2" fill="#333" font-weight="normal" text-anchor="start" transform-origin="656.7 308.3" transform="scale(0.85 1)">R</text>
<text x="683.9" y="306.1" font-family='"Liberation Sans", sans-serif' font-size="8.2" fill="#333" font-weight="normal" text-anchor="start" transform-origin="683.9 308.3" transform="scale(0.85 1)">4</text>
<text x="702.9" y="306.1" font-family='"Liberation Sans", sans-serif' font-size="8.2" fill="#333" font-weight="normal" text-anchor="start" transform-origin="702.9 308.3" transform="scale(0.85 1)">XSW/F</text>
<text x="646.5" y="316.8" font-family='"Liberation Sans", sans-serif' font-size="8.2" fill="#333" font-weight="normal" text-anchor="start" transform-origin="646.5 319.0" transform="scale(0.85 1)">13</text>
<text x="656.7" y="316.8" font-family='"Liberation Sans", sans-serif' font-size="8.2" fill="#333" font-weight="normal" text-anchor="start" transform-origin="656.7 319.0" transform="scale(0.85 1)">R</text>
<text x="683.9" y="316.8" font-family='"Liberation Sans", sans-serif' font-size="8.2" fill="#333" font-weight="normal" text-anchor="start" transform-origin="683.9 319.0" transform="scale(0.85 1)">4</text>
<text x="702.9" y="316.8" font-family='"Liberation Sans", sans-serif' font-size="8.2" fill="#333" font-weight="normal" text-anchor="start" transform-origin="702.9 319.0" transform="scale(0.85 1)">XRLA/11</text>
<text x="697.3" y="419.4" font-family='"Liberation Sans", sans-serif' font-size="23" fill="#111111" font-weight="normal" text-anchor="start" textLength="42.5" lengthAdjust="spacingAndGlyphs" stroke="#fff" stroke-width="0.35">XISO</text>
<text x="698.0" y="435.4" font-family='"Liberation Sans", sans-serif' font-size="8" fill="#3a3a3a" font-weight="normal" text-anchor="start" textLength="40.0" lengthAdjust="spacingAndGlyphs" >Occhielli M8</text>
<rect x="697.4" y="437.5" width="88.8" height="21.9" fill="none" stroke="#4aa6d0" stroke-width="1.1" />
<line x1="707.5" y1="437.5" x2="707.5" y2="459.4" stroke="#4aa6d0" stroke-width="1.1" />
<line x1="735.3" y1="437.5" x2="735.3" y2="459.4" stroke="#4aa6d0" stroke-width="1.1" />
<line x1="754.7" y1="437.5" x2="754.7" y2="459.4" stroke="#4aa6d0" stroke-width="1.1" />
<line x1="697.4" y1="448.7" x2="786.2" y2="448.7" stroke="#4aa6d0" stroke-width="1.1" />
<text x="698.9" y="446.5" font-family='"Liberation Sans", sans-serif' font-size="8.2" fill="#333" font-weight="normal" text-anchor="start" transform-origin="698.9 448.7" transform="scale(0.85 1)">P.</text>
<text x="709.0" y="446.5" font-family='"Liberation Sans", sans-serif' font-size="8.2" fill="#333" font-weight="normal" text-anchor="start" transform-origin="709.0 448.7" transform="scale(0.85 1)">COL./N.</text>
<text x="736.8" y="446.5" font-family='"Liberation Sans", sans-serif' font-size="8.2" fill="#333" font-weight="normal" text-anchor="start" transform-origin="736.8 448.7" transform="scale(0.85 1)">SEZ.</text>
<text x="770.5" y="446.5" font-family='"Liberation Sans", sans-serif' font-size="8.2" fill="#333" font-weight="normal" text-anchor="middle" transform-origin="770.5 448.7" transform="scale(0.85 1)">RIF.</text>
<text x="698.9" y="457.2" font-family='"Liberation Sans", sans-serif' font-size="8.2" fill="#333" font-weight="normal" text-anchor="start" transform-origin="698.9 459.4" transform="scale(0.85 1)">1</text>
<text x="709.0" y="457.2" font-family='"Liberation Sans", sans-serif' font-size="8.2" fill="#333" font-weight="normal" text-anchor="start" transform-origin="709.0 459.4" transform="scale(0.85 1)">T</text>
<text x="736.8" y="457.2" font-family='"Liberation Sans", sans-serif' font-size="8.2" fill="#333" font-weight="normal" text-anchor="start" transform-origin="736.8 459.4" transform="scale(0.85 1)">4</text>
<text x="756.2" y="457.2" font-family='"Liberation Sans", sans-serif' font-size="8.2" fill="#333" font-weight="normal" text-anchor="start" transform-origin="756.2 459.4" transform="scale(0.85 1)">XCC/-</text>
<text x="196.0" y="528.8" font-family='"Liberation Sans", sans-serif' font-size="23" fill="#111111" font-weight="normal" text-anchor="start" textLength="35.3" lengthAdjust="spacingAndGlyphs" stroke="#fff" stroke-width="0.35">XLA</text>
<text x="196.0" y="545.0" font-family='"Liberation Sans", sans-serif' font-size="8" fill="#3a3a3a" font-weight="normal" text-anchor="start" textLength="100.7" lengthAdjust="spacingAndGlyphs" >Molex MX'150 L 19432-0013</text>
<rect x="196.4" y="547.5" width="88.1" height="32.8" fill="none" stroke="#4aa6d0" stroke-width="1.1" />
<line x1="206.4" y1="547.5" x2="206.4" y2="580.3" stroke="#4aa6d0" stroke-width="1.1" />
<line x1="234.3" y1="547.5" x2="234.3" y2="580.3" stroke="#4aa6d0" stroke-width="1.1" />
<line x1="252.3" y1="547.5" x2="252.3" y2="580.3" stroke="#4aa6d0" stroke-width="1.1" />
<line x1="196.4" y1="558.5" x2="284.5" y2="558.5" stroke="#4aa6d0" stroke-width="1.1" />
<line x1="196.4" y1="569.4" x2="284.5" y2="569.4" stroke="#4aa6d0" stroke-width="1.1" />
<text x="197.9" y="556.3" font-family='"Liberation Sans", sans-serif' font-size="8.2" fill="#333" font-weight="normal" text-anchor="start" transform-origin="197.9 558.5" transform="scale(0.85 1)">P.</text>
<text x="207.9" y="556.3" font-family='"Liberation Sans", sans-serif' font-size="8.2" fill="#333" font-weight="normal" text-anchor="start" transform-origin="207.9 558.5" transform="scale(0.85 1)">COL./N.</text>
<text x="235.8" y="556.3" font-family='"Liberation Sans", sans-serif' font-size="8.2" fill="#333" font-weight="normal" text-anchor="start" transform-origin="235.8 558.5" transform="scale(0.85 1)">SEZ.</text>
<text x="268.4" y="556.3" font-family='"Liberation Sans", sans-serif' font-size="8.2" fill="#333" font-weight="normal" text-anchor="middle" transform-origin="268.4 558.5" transform="scale(0.85 1)">RIF.</text>
<text x="197.9" y="567.2" font-family='"Liberation Sans", sans-serif' font-size="8.2" fill="#333" font-weight="normal" text-anchor="start" transform-origin="197.9 569.4" transform="scale(0.85 1)">1</text>
<text x="207.9" y="567.2" font-family='"Liberation Sans", sans-serif' font-size="8.2" fill="#333" font-weight="normal" text-anchor="start" transform-origin="207.9 569.4" transform="scale(0.85 1)">T</text>
<text x="235.8" y="567.2" font-family='"Liberation Sans", sans-serif' font-size="8.2" fill="#333" font-weight="normal" text-anchor="start" transform-origin="235.8 569.4" transform="scale(0.85 1)">4</text>
<text x="253.8" y="567.2" font-family='"Liberation Sans", sans-serif' font-size="8.2" fill="#333" font-weight="normal" text-anchor="start" transform-origin="253.8 569.4" transform="scale(0.85 1)">XISO</text>
<text x="197.9" y="578.1" font-family='"Liberation Sans", sans-serif' font-size="8.2" fill="#333" font-weight="normal" text-anchor="start" transform-origin="197.9 580.3" transform="scale(0.85 1)">2</text>
<text x="207.9" y="578.1" font-family='"Liberation Sans", sans-serif' font-size="8.2" fill="#333" font-weight="normal" text-anchor="start" transform-origin="207.9 580.3" transform="scale(0.85 1)">M</text>
<text x="235.8" y="578.1" font-family='"Liberation Sans", sans-serif' font-size="8.2" fill="#333" font-weight="normal" text-anchor="start" transform-origin="235.8 580.3" transform="scale(0.85 1)">4</text>
<text x="253.8" y="578.1" font-family='"Liberation Sans", sans-serif' font-size="8.2" fill="#333" font-weight="normal" text-anchor="start" transform-origin="253.8 580.3" transform="scale(0.85 1)">XRLA/14</text>
<text x="392.0" y="535.0" font-family='"Liberation Sans", sans-serif' font-size="23" fill="#111111" font-weight="normal" text-anchor="start" textLength="50.0" lengthAdjust="spacingAndGlyphs" stroke="#fff" stroke-width="0.35">XMLA</text>
<text x="392.0" y="551.3" font-family='"Liberation Sans", sans-serif' font-size="8" fill="#3a3a3a" font-weight="normal" text-anchor="start" textLength="102.9" lengthAdjust="spacingAndGlyphs" >Deutsch DTM06-4S + contatti</text>
<rect x="392.2" y="553.3" width="88.9" height="33.4" fill="none" stroke="#4aa6d0" stroke-width="1.1" />
<line x1="402.4" y1="553.3" x2="402.4" y2="586.7" stroke="#4aa6d0" stroke-width="1.1" />
<line x1="429.5" y1="553.3" x2="429.5" y2="586.7" stroke="#4aa6d0" stroke-width="1.1" />
<line x1="449.3" y1="553.3" x2="449.3" y2="586.7" stroke="#4aa6d0" stroke-width="1.1" />
<line x1="392.2" y1="564.5" x2="481.1" y2="564.5" stroke="#4aa6d0" stroke-width="1.1" />
<line x1="392.2" y1="575.3" x2="481.1" y2="575.3" stroke="#4aa6d0" stroke-width="1.1" />
<text x="393.7" y="562.3" font-family='"Liberation Sans", sans-serif' font-size="8.2" fill="#333" font-weight="normal" text-anchor="start" transform-origin="393.7 564.5" transform="scale(0.85 1)">P.</text>
<text x="403.9" y="562.3" font-family='"Liberation Sans", sans-serif' font-size="8.2" fill="#333" font-weight="normal" text-anchor="start" transform-origin="403.9 564.5" transform="scale(0.85 1)">COL./N.</text>
<text x="431.0" y="562.3" font-family='"Liberation Sans", sans-serif' font-size="8.2" fill="#333" font-weight="normal" text-anchor="start" transform-origin="431.0 564.5" transform="scale(0.85 1)">SEZ.</text>
<text x="465.2" y="562.3" font-family='"Liberation Sans", sans-serif' font-size="8.2" fill="#333" font-weight="normal" text-anchor="middle" transform-origin="465.2 564.5" transform="scale(0.85 1)">RIF.</text>
<text x="393.7" y="573.1" font-family='"Liberation Sans", sans-serif' font-size="8.2" fill="#333" font-weight="normal" text-anchor="start" transform-origin="393.7 575.3" transform="scale(0.85 1)">1</text>
<text x="403.9" y="573.1" font-family='"Liberation Sans", sans-serif' font-size="8.2" fill="#333" font-weight="normal" text-anchor="start" transform-origin="403.9 575.3" transform="scale(0.85 1)">V</text>
<text x="431.0" y="573.1" font-family='"Liberation Sans", sans-serif' font-size="8.2" fill="#333" font-weight="normal" text-anchor="start" transform-origin="431.0 575.3" transform="scale(0.85 1)">0.5</text>
<text x="450.8" y="573.1" font-family='"Liberation Sans", sans-serif' font-size="8.2" fill="#333" font-weight="normal" text-anchor="start" transform-origin="450.8 575.3" transform="scale(0.85 1)">XJ7/1</text>
<text x="393.7" y="584.5" font-family='"Liberation Sans", sans-serif' font-size="8.2" fill="#333" font-weight="normal" text-anchor="start" transform-origin="393.7 586.7" transform="scale(0.85 1)">4</text>
<text x="403.9" y="584.5" font-family='"Liberation Sans", sans-serif' font-size="8.2" fill="#333" font-weight="normal" text-anchor="start" transform-origin="403.9 586.7" transform="scale(0.85 1)">G</text>
<text x="431.0" y="584.5" font-family='"Liberation Sans", sans-serif' font-size="8.2" fill="#333" font-weight="normal" text-anchor="start" transform-origin="431.0 586.7" transform="scale(0.85 1)">0.5</text>
<text x="450.8" y="584.5" font-family='"Liberation Sans", sans-serif' font-size="8.2" fill="#333" font-weight="normal" text-anchor="start" transform-origin="450.8 586.7" transform="scale(0.85 1)">XJ7/18</text>
<rect x="346.0" y="171.1" width="7.2" height="3.5" fill="#fff" stroke="#222" stroke-width="0.8" />
<rect x="348.8" y="172.1" width="1.6" height="2.5" fill="#5a1818" />
<rect x="345.2" y="174.6" width="8.8" height="16.1" fill="#a85050" stroke="#222" stroke-width="0.8" />
<rect x="346.8" y="176.1" width="1.4" height="13.1" fill="#e8b0b0" />
<rect x="351.0" y="176.1" width="1.4" height="13.1" fill="#e8b0b0" />
<rect x="348.4" y="176.1" width="2.4" height="4.0" fill="#e8b0b0" stroke="#5a1818" stroke-width="0.6" />
<line x1="347.2" y1="182.1" x2="352.0" y2="182.1" stroke="#5a1818" stroke-width="0.8" />
<rect x="348.6" y="184.1" width="2.0" height="4.6" fill="#e8b0b0" />
<text x="355.2" y="183.4" font-family='"Liberation Sans", sans-serif' font-size="7" fill="#222" font-weight="bold" text-anchor="start" >c</text>
<rect x="367.0" y="171.1" width="7.0" height="3.5" fill="#fff" stroke="#000" stroke-width="0.8" />
<rect x="369.7" y="172.1" width="1.6" height="2.5" fill="#000" />
<rect x="366.2" y="174.6" width="8.6" height="16.1" fill="#2a2a2a" stroke="#000" stroke-width="0.8" />
<rect x="367.8" y="176.1" width="1.4" height="13.1" fill="#9a9a9a" />
<rect x="371.8" y="176.1" width="1.4" height="13.1" fill="#9a9a9a" />
<rect x="369.3" y="176.1" width="2.4" height="4.0" fill="#9a9a9a" stroke="#000" stroke-width="0.6" />
<line x1="368.2" y1="182.1" x2="372.8" y2="182.1" stroke="#000" stroke-width="0.8" />
<rect x="369.5" y="184.1" width="2.0" height="4.6" fill="#9a9a9a" />
<text x="376.0" y="183.4" font-family='"Liberation Sans", sans-serif' font-size="7" fill="#222" font-weight="bold" text-anchor="start" >c</text>
<rect x="398.6" y="170.2" width="7.3" height="11.5" fill="#fff" stroke="#333" stroke-width="0.8" />
<rect x="400.1" y="172.2" width="4.3" height="7.0" fill="#eee" stroke="#666" stroke-width="0.6" />
<rect x="401.4" y="173.2" width="1.6" height="5.0" fill="#555" />
<line x1="399.1" y1="182.7" x2="405.4" y2="182.7" stroke="#555" stroke-width="0.7" />
<rect x="398.1" y="183.4" width="8.3" height="10.7" fill="#eedd88" stroke="#777" stroke-width="0.8" />
<line x1="398.1" y1="191.1" x2="406.4" y2="191.1" stroke="#222" stroke-width="1" />
<text x="407.6" y="187.7" font-family='"Liberation Sans", sans-serif' font-size="7" fill="#222" font-weight="bold" text-anchor="start" >c</text>
<rect x="426.7" y="170.2" width="7.2" height="11.5" fill="#fff" stroke="#333" stroke-width="0.8" />
<rect x="428.2" y="172.2" width="4.2" height="7.0" fill="#eee" stroke="#666" stroke-width="0.6" />
<rect x="429.5" y="173.2" width="1.6" height="5.0" fill="#555" />
<line x1="427.2" y1="182.7" x2="433.4" y2="182.7" stroke="#555" stroke-width="0.7" />
<rect x="426.2" y="183.4" width="8.2" height="10.7" fill="#eedd88" stroke="#777" stroke-width="0.8" />
<line x1="426.2" y1="191.1" x2="434.4" y2="191.1" stroke="#222" stroke-width="1" />
<text x="435.6" y="187.7" font-family='"Liberation Sans", sans-serif' font-size="7" fill="#222" font-weight="bold" text-anchor="start" >c</text>
<text x="344.0" y="168.3" font-family='"Liberation Sans", sans-serif' font-size="8" fill="#333" font-weight="normal" text-anchor="start" textLength="10.0" lengthAdjust="spacingAndGlyphs" >A2</text>
<text x="366.5" y="168.3" font-family='"Liberation Sans", sans-serif' font-size="8" fill="#333" font-weight="normal" text-anchor="start" textLength="8.0" lengthAdjust="spacingAndGlyphs" >A1</text>
<text x="398.5" y="168.0" font-family='"Liberation Sans", sans-serif' font-size="8" fill="#333" font-weight="normal" text-anchor="start" textLength="7.0" lengthAdjust="spacingAndGlyphs" >11</text>
<text x="426.5" y="166.5" font-family='"Liberation Sans", sans-serif' font-size="8" fill="#333" font-weight="normal" text-anchor="start" textLength="8.0" lengthAdjust="spacingAndGlyphs" >14</text>
<text x="375.5" y="153.7" font-family='"Liberation Sans", sans-serif' font-size="8" fill="#333" font-weight="normal" text-anchor="start" textLength="19.3" lengthAdjust="spacingAndGlyphs" >XRLA</text>
<text x="415.0" y="144.0" font-family='"Liberation Sans", sans-serif' font-size="10" fill="#2020c0" font-weight="normal" text-anchor="start" textLength="24.0" lengthAdjust="spacingAndGlyphs" stroke="#2020c0" stroke-width="0.45">XLRA</text>
<path d="M349.6,190.7 C349.6,215 360,215 360,233.7" fill="none" stroke="#505050" stroke-width="1"/>
<path d="M370.5,190.7 C370.5,215 360,215 360,233.7" fill="none" stroke="#505050" stroke-width="1"/>
<rect x="353.6" y="233.7" width="12.6" height="24.3" fill="#000" />
<text x="336.8" y="254.9" font-family='"Liberation Sans", sans-serif' font-size="11" fill="#555" font-weight="normal" text-anchor="start" textLength="12.2" lengthAdjust="spacingAndGlyphs" >50</text>
<path d="M402.2,194.1 C402.2,225 417,220 417,235.6" fill="none" stroke="#505050" stroke-width="1"/>
<path d="M430.3,194.1 C430.3,225 417,220 417,235.6" fill="none" stroke="#505050" stroke-width="1"/>
<rect x="410.7" y="235.6" width="12.5" height="24.7" fill="#000" />
<text x="395.7" y="254.3" font-family='"Liberation Sans", sans-serif' font-size="11" fill="#555" font-weight="normal" text-anchor="start" textLength="12.3" lengthAdjust="spacingAndGlyphs" >50</text>
<path d="M360,258 C360,280 365,280 380,280.3 L467.6,280.6" fill="none" stroke="#505050" stroke-width="1"/>
<path d="M417,260.3 C417,280 420,280.6 435,280.6" fill="none" stroke="#505050" stroke-width="1"/>
<path d="M268.5,316.4 C268.5,290 300,281 368,280.3" fill="none" stroke="#505050" stroke-width="1"/>
<path d="M334.9,316.4 C334.9,290 345,281 368,280.3" fill="none" stroke="#505050" stroke-width="1"/>
<rect x="262.3" y="316.4" width="12.7" height="24.1" fill="#000" />
<text x="247.6" y="333.7" font-family='"Liberation Sans", sans-serif' font-size="11" fill="#555" font-weight="normal" text-anchor="start" textLength="11.9" lengthAdjust="spacingAndGlyphs" >50</text>
<rect x="328.7" y="316.4" width="12.7" height="24.1" fill="#000" />
<text x="314.8" y="333.7" font-family='"Liberation Sans", sans-serif' font-size="11" fill="#555" font-weight="normal" text-anchor="start" textLength="11.9" lengthAdjust="spacingAndGlyphs" >50</text>
<path d="M268.7,340.5 C268.7,355 255.7,352 255.7,364" fill="none" stroke="#505050" stroke-width="1"/>
<path d="M268.7,340.5 C268.7,355 278,352 278,364" fill="none" stroke="#505050" stroke-width="1"/>
<path d="M251.7,364 L259.7,364 L258.3,368 L253.1,368 Z" fill="#fff" stroke="#333" stroke-width="0.8"/>
<rect x="253.7" y="369.0" width="4.0" height="5.5" fill="#333" />
<line x1="253.7" y1="371.0" x2="257.7" y2="371.0" stroke="#bbb" stroke-width="0.6" />
<ellipse cx="255.7" cy="377" rx="1.6" ry="1.3" fill="none" stroke="#333" stroke-width="0.8"/>
<path d="M253.7,379 L254.5,386 L256.9,386 L257.7,379 Z" fill="#444"/>
<rect x="254.1" y="386.0" width="3.2" height="9.8" fill="#fafafa" stroke="#aaa" stroke-width="0.6" />
<path d="M274,364 L282,364 L280.6,368 L275.4,368 Z" fill="#fff" stroke="#333" stroke-width="0.8"/>
<rect x="276.0" y="369.0" width="4.0" height="5.5" fill="#333" />
<line x1="276.0" y1="371.0" x2="280.0" y2="371.0" stroke="#bbb" stroke-width="0.6" />
<ellipse cx="278" cy="377" rx="1.6" ry="1.3" fill="none" stroke="#333" stroke-width="0.8"/>
<path d="M276,379 L276.8,386 L279.2,386 L280,379 Z" fill="#444"/>
<rect x="276.4" y="386.0" width="3.2" height="9.8" fill="#fafafa" stroke="#aaa" stroke-width="0.6" />
<path d="M334.9,340.5 C334.9,355 321.6,352 321.6,364" fill="none" stroke="#505050" stroke-width="1"/>
<path d="M334.9,340.5 C334.9,355 344,352 344,364" fill="none" stroke="#505050" stroke-width="1"/>
<path d="M317.6,364 L325.6,364 L324.20000000000005,368 L319.0,368 Z" fill="#fff" stroke="#333" stroke-width="0.8"/>
<rect x="319.6" y="369.0" width="4.0" height="5.5" fill="#333" />
<line x1="319.6" y1="371.0" x2="323.6" y2="371.0" stroke="#bbb" stroke-width="0.6" />
<ellipse cx="321.6" cy="377" rx="1.6" ry="1.3" fill="none" stroke="#333" stroke-width="0.8"/>
<path d="M319.6,379 L320.40000000000003,386 L322.8,386 L323.6,379 Z" fill="#444"/>
<rect x="320.0" y="386.0" width="3.2" height="9.8" fill="#fafafa" stroke="#aaa" stroke-width="0.6" />
<path d="M340,364 L348,364 L346.6,368 L341.4,368 Z" fill="#fff" stroke="#333" stroke-width="0.8"/>
<rect x="342.0" y="369.0" width="4.0" height="5.5" fill="#333" />
<line x1="342.0" y1="371.0" x2="346.0" y2="371.0" stroke="#bbb" stroke-width="0.6" />
<ellipse cx="344" cy="377" rx="1.6" ry="1.3" fill="none" stroke="#333" stroke-width="0.8"/>
<path d="M342,379 L342.8,386 L345.2,386 L346,379 Z" fill="#444"/>
<rect x="342.4" y="386.0" width="3.2" height="9.8" fill="#fafafa" stroke="#aaa" stroke-width="0.6" />
<text x="253.3" y="404.7" font-family='"Liberation Sans", sans-serif' font-size="8.8" fill="#555" font-weight="normal" text-anchor="start" textLength="4.0" lengthAdjust="spacingAndGlyphs" >1</text>
<text x="274.8" y="404.7" font-family='"Liberation Sans", sans-serif' font-size="8.8" fill="#555" font-weight="normal" text-anchor="start" textLength="7.5" lengthAdjust="spacingAndGlyphs" >18</text>
<text x="319.6" y="404.7" font-family='"Liberation Sans", sans-serif' font-size="8.8" fill="#555" font-weight="normal" text-anchor="start" textLength="4.5" lengthAdjust="spacingAndGlyphs" >8</text>
<text x="341.0" y="404.7" font-family='"Liberation Sans", sans-serif' font-size="8.8" fill="#555" font-weight="normal" text-anchor="start" textLength="8.0" lengthAdjust="spacingAndGlyphs" >12</text>
<text x="261.3" y="416.0" font-family='"Liberation Sans", sans-serif' font-size="8" fill="#555" font-weight="normal" text-anchor="start" textLength="12.5" lengthAdjust="spacingAndGlyphs" >XJ7</text>
<text x="274.2" y="413.5" font-family='"Liberation Sans", sans-serif' font-size="10" fill="#2020c0" font-weight="normal" text-anchor="start" textLength="21.1" lengthAdjust="spacingAndGlyphs" stroke="#2020c0" stroke-width="0.45">XJ17</text>
<text x="326.2" y="418.6" font-family='"Liberation Sans", sans-serif' font-size="8" fill="#555" font-weight="normal" text-anchor="start" textLength="14.5" lengthAdjust="spacingAndGlyphs" >XJ11</text>
<text x="341.4" y="418.6" font-family='"Liberation Sans", sans-serif' font-size="10" fill="#2020c0" font-weight="normal" text-anchor="start" textLength="19.0" lengthAdjust="spacingAndGlyphs" stroke="#2020c0" stroke-width="0.45">XJ11</text>
<rect x="467.6" y="274.7" width="25.1" height="12.6" fill="#000" />
<text x="472.6" y="272.0" font-family='"Liberation Sans", sans-serif' font-size="11" fill="#555" font-weight="normal" text-anchor="start" textLength="16.4" lengthAdjust="spacingAndGlyphs" >150</text>
<path d="M492.7,280.6 L505,280.6 C512,280.6 514.3,286 514.3,295 L514.3,363.4" fill="none" stroke="#505050" stroke-width="1"/>
<path d="M505,280.6 L535,280.6 C550,281 558,292 566,305" fill="none" stroke="#505050" stroke-width="1"/>
<g transform="translate(566 305) rotate(-31.7)"><path d="M-2.6,9 L-3,13.600000000000001 L3,13.600000000000001 L2.6,9 Z" fill="#ddd" stroke="#666" stroke-width="0.6"/><circle cx="0" cy="16.6" r="5.3" fill="#e4e4e4" stroke="#555" stroke-width="0.8"/><circle cx="0" cy="16.6" r="2.8" fill="#fff" stroke="#555" stroke-width="0.8"/><rect x="-3.6" y="0" width="7.2" height="9.5" fill="#ecd878" stroke="#444" stroke-width="0.7"/><rect x="-4" y="0" width="8" height="2.2" fill="#f4e490" stroke="#333" stroke-width="0.7"/><rect x="5" y="2" width="1.8" height="2.5" fill="#333"/></g>
<text x="597.6" y="321.4" font-family='"Liberation Sans", sans-serif' font-size="10" fill="#2020c0" font-weight="normal" text-anchor="start" textLength="20.8" lengthAdjust="spacingAndGlyphs" stroke="#2020c0" stroke-width="0.45">XSW</text>
<text x="579.4" y="357.5" font-family='"Liberation Sans", sans-serif' font-size="7" fill="#333" font-weight="normal" text-anchor="start" textLength="16.9" lengthAdjust="spacingAndGlyphs" >XSW</text>
<rect x="508.1" y="363.4" width="12.6" height="24.0" fill="#000" />
<text x="488.1" y="381.5" font-family='"Liberation Sans", sans-serif' font-size="11" fill="#555" font-weight="normal" text-anchor="start" textLength="17.0" lengthAdjust="spacingAndGlyphs" >150</text>
<path d="M514.3,387.4 L514.3,470" fill="none" stroke="#505050" stroke-width="1"/>
<path d="M514.3,387.4 C514.3,408 518,413.6 528,413.6 L552,414 C558,414.3 561,415.5 566.5,417.6" fill="none" stroke="#505050" stroke-width="1"/>
<g transform="translate(566.5 417.6) rotate(-64.1)"><path d="M-2.6,9 L-3,15.600000000000001 L3,15.600000000000001 L2.6,9 Z" fill="#ddd" stroke="#666" stroke-width="0.6"/><circle cx="0" cy="18.6" r="5.3" fill="#e4e4e4" stroke="#555" stroke-width="0.8"/><circle cx="0" cy="18.6" r="2.8" fill="#fff" stroke="#555" stroke-width="0.8"/><rect x="-3.6" y="0" width="7.2" height="9.5" fill="#ecd878" stroke="#444" stroke-width="0.7"/><rect x="-4" y="0" width="8" height="2.2" fill="#f4e490" stroke="#333" stroke-width="0.7"/><rect x="5" y="2" width="1.8" height="2.5" fill="#333"/></g>
<text x="598.1" y="419.4" font-family='"Liberation Sans", sans-serif' font-size="7" fill="#333" font-weight="normal" text-anchor="start" textLength="17.0" lengthAdjust="spacingAndGlyphs" >XISO</text>
<text x="616.0" y="419.4" font-family='"Liberation Sans", sans-serif' font-size="10" fill="#2020c0" font-weight="normal" text-anchor="start" textLength="22.0" lengthAdjust="spacingAndGlyphs" stroke="#2020c0" stroke-width="0.45">XISO</text>
<rect x="655.9" y="358.0" width="8.0" height="3.5" fill="#fff" stroke="#222" stroke-width="0.8" />
<rect x="659.1" y="359.0" width="1.6" height="2.5" fill="#5a1818" />
<rect x="655.1" y="361.5" width="9.6" height="16.2" fill="#a85050" stroke="#222" stroke-width="0.8" />
<rect x="656.7" y="363.0" width="1.4" height="13.2" fill="#e8b0b0" />
<rect x="661.7" y="363.0" width="1.4" height="13.2" fill="#e8b0b0" />
<rect x="658.7" y="363.0" width="2.4" height="4.0" fill="#e8b0b0" stroke="#5a1818" stroke-width="0.6" />
<line x1="657.1" y1="369.0" x2="662.7" y2="369.0" stroke="#5a1818" stroke-width="0.8" />
<rect x="658.9" y="371.0" width="2.0" height="4.7" fill="#e8b0b0" />
<text x="665.9" y="370.4" font-family='"Liberation Sans", sans-serif' font-size="7" fill="#222" font-weight="bold" text-anchor="start" >c</text>
<rect x="684.8" y="358.0" width="7.1" height="3.5" fill="#fff" stroke="#555" stroke-width="0.8" />
<rect x="687.6" y="359.0" width="1.6" height="2.5" fill="#777" />
<rect x="684.0" y="361.5" width="8.7" height="16.2" fill="#fafafa" stroke="#555" stroke-width="0.8" />
<rect x="685.6" y="363.0" width="1.4" height="13.2" fill="#ffffff" />
<rect x="689.7" y="363.0" width="1.4" height="13.2" fill="#ffffff" />
<rect x="687.1" y="363.0" width="2.4" height="4.0" fill="#ffffff" stroke="#777" stroke-width="0.6" />
<line x1="686.0" y1="369.0" x2="690.7" y2="369.0" stroke="#777" stroke-width="0.8" />
<rect x="687.4" y="371.0" width="2.0" height="4.7" fill="#ffffff" />
<text x="693.9" y="370.4" font-family='"Liberation Sans", sans-serif' font-size="7" fill="#222" font-weight="bold" text-anchor="start" >c</text>
<text x="657.5" y="354.4" font-family='"Liberation Sans", sans-serif' font-size="8" fill="#333" font-weight="normal" text-anchor="start" >5</text>
<text x="684.5" y="354.4" font-family='"Liberation Sans", sans-serif' font-size="8" fill="#333" font-weight="normal" text-anchor="start" textLength="8.0" lengthAdjust="spacingAndGlyphs" >13</text>
<path d="M659.9,377.7 C659.9,390 674,385 674,393" fill="none" stroke="#505050" stroke-width="1"/>
<path d="M688.3,377.7 C688.3,390 674,385 674,393" fill="none" stroke="#505050" stroke-width="1"/>
<text x="653.4" y="397.7" font-family='"Liberation Sans", sans-serif' font-size="7.5" fill="#333" font-weight="normal" text-anchor="start" textLength="13.0" lengthAdjust="spacingAndGlyphs" >XF</text>
<text x="722.8" y="341.4" font-family='"Liberation Sans", sans-serif' font-size="10" fill="#2020c0" font-weight="normal" text-anchor="start" textLength="11.5" lengthAdjust="spacingAndGlyphs" stroke="#2020c0" stroke-width="0.45">XF</text>
<path d="M674,393 L674,455 C674,480 660,486 640,486.4 L576.4,486.4" fill="none" stroke="#505050" stroke-width="1"/>
<path d="M514.3,470 L514.3,530 C514.3,545 520,548 535,548 L546,548" fill="none" stroke="#505050" stroke-width="1"/>
<path d="M469.2,486.4 L495,486.4 C508,486.4 514.3,480 514.3,470" fill="none" stroke="#505050" stroke-width="1"/>
<path d="M551.6,486.4 L533,486.4 C520,486.4 514.3,480 514.3,470" fill="none" stroke="#505050" stroke-width="1"/>
<rect x="551.6" y="480.4" width="24.8" height="12.0" fill="#000" />
<text x="555.0" y="477.0" font-family='"Liberation Sans", sans-serif' font-size="11" fill="#555" font-weight="normal" text-anchor="start" textLength="17.0" lengthAdjust="spacingAndGlyphs" >250</text>
<rect x="294.3" y="477.1" width="3.9" height="19.5" fill="#fff" stroke="#444" stroke-width="0.8" />
<rect x="294.6" y="485.0" width="2.2" height="4.0" fill="none" stroke="#444" stroke-width="0.6" />
<rect x="298.2" y="472.3" width="21.5" height="28.2" fill="#fff" stroke="#444" stroke-width="0.8" />
<line x1="298.2" y1="476.1" x2="319.7" y2="476.1" stroke="#555" stroke-width="0.7" />
<line x1="298.2" y1="481.3" x2="319.7" y2="481.3" stroke="#555" stroke-width="0.7" />
<line x1="298.2" y1="491.2" x2="319.7" y2="491.2" stroke="#555" stroke-width="0.7" />
<line x1="298.2" y1="497.5" x2="319.7" y2="497.5" stroke="#555" stroke-width="0.7" />
<rect x="319.7" y="476.2" width="15.8" height="20.1" fill="#fff" stroke="#444" stroke-width="0.8" />
<rect x="313.5" y="480.4" width="16.2" height="12.6" fill="#fff" stroke="#222" stroke-width="1" />
<rect x="315.5" y="482.5" width="6.5" height="8.3" fill="#ddd" stroke="#555" stroke-width="0.6" />
<rect x="327.8" y="480.4" width="2.2" height="12.6" fill="#222" />
<line x1="333.0" y1="477.0" x2="333.0" y2="496.0" stroke="#666" stroke-width="0.6" />
<text x="303.0" y="467.3" font-family='"Liberation Sans", sans-serif' font-size="8" fill="#333" font-weight="normal" text-anchor="start" textLength="14.5" lengthAdjust="spacingAndGlyphs" >XLA</text>
<text x="288.7" y="475.5" font-family='"Liberation Sans", sans-serif' font-size="10" fill="#2020c0" font-weight="normal" text-anchor="start" textLength="18.6" lengthAdjust="spacingAndGlyphs" stroke="#2020c0" stroke-width="0.45">XLA</text>
<path d="M335.6,486.4 L422.4,486.4" fill="none" stroke="#505050" stroke-width="1"/>
<clipPath id="cl1"><rect x="422.4" y="480.3" width="46.8" height="12.2"/></clipPath>
<rect x="422.4" y="480.3" width="46.8" height="12.2" fill="#fff" />
<g clip-path="url(#cl1)" fill="none" stroke="#444" stroke-width="0.75"><path d="M427.0,486.4 L425.2,489.5 L421.6,489.5 L419.8,486.4 L421.6,483.3 L425.2,483.3ZM430.4,480.2 L428.6,483.3 L425.0,483.3 L423.2,480.2 L425.0,477.1 L428.6,477.1ZM430.4,492.6 L428.6,495.7 L425.0,495.7 L423.2,492.6 L425.0,489.5 L428.6,489.5ZM433.8,486.4 L432.0,489.5 L428.4,489.5 L426.6,486.4 L428.4,483.3 L432.0,483.3ZM437.2,480.2 L435.4,483.3 L431.8,483.3 L430.0,480.2 L431.8,477.1 L435.4,477.1ZM437.2,492.6 L435.4,495.7 L431.8,495.7 L430.0,492.6 L431.8,489.5 L435.4,489.5ZM440.6,486.4 L438.8,489.5 L435.2,489.5 L433.4,486.4 L435.2,483.3 L438.8,483.3ZM444.0,480.2 L442.2,483.3 L438.6,483.3 L436.8,480.2 L438.6,477.1 L442.2,477.1ZM444.0,492.6 L442.2,495.7 L438.6,495.7 L436.8,492.6 L438.6,489.5 L442.2,489.5ZM447.4,486.4 L445.6,489.5 L442.0,489.5 L440.2,486.4 L442.0,483.3 L445.6,483.3ZM450.8,480.2 L449.0,483.3 L445.4,483.3 L443.6,480.2 L445.4,477.1 L449.0,477.1ZM450.8,492.6 L449.0,495.7 L445.4,495.7 L443.6,492.6 L445.4,489.5 L449.0,489.5ZM454.2,486.4 L452.4,489.5 L448.8,489.5 L447.0,486.4 L448.8,483.3 L452.4,483.3ZM457.6,480.2 L455.8,483.3 L452.2,483.3 L450.4,480.2 L452.2,477.1 L455.8,477.1ZM457.6,492.6 L455.8,495.7 L452.2,495.7 L450.4,492.6 L452.2,489.5 L455.8,489.5ZM461.0,486.4 L459.2,489.5 L455.6,489.5 L453.8,486.4 L455.6,483.3 L459.2,483.3ZM464.4,480.2 L462.6,483.3 L459.0,483.3 L457.2,480.2 L459.0,477.1 L462.6,477.1ZM464.4,492.6 L462.6,495.7 L459.0,495.7 L457.2,492.6 L459.0,489.5 L462.6,489.5ZM467.8,486.4 L466.0,489.5 L462.4,489.5 L460.6,486.4 L462.4,483.3 L466.0,483.3ZM471.2,480.2 L469.4,483.3 L465.8,483.3 L464.0,480.2 L465.8,477.1 L469.4,477.1ZM471.2,492.6 L469.4,495.7 L465.8,495.7 L464.0,492.6 L465.8,489.5 L469.4,489.5ZM474.6,486.4 L472.8,489.5 L469.2,489.5 L467.4,486.4 L469.2,483.3 L472.8,483.3ZM478.0,480.2 L476.2,483.3 L472.6,483.3 L470.8,480.2 L472.6,477.1 L476.2,477.1ZM478.0,492.6 L476.2,495.7 L472.6,495.7 L470.8,492.6 L472.6,489.5 L476.2,489.5Z"/></g>
<rect x="422.4" y="480.3" width="46.8" height="12.2" fill="none" stroke="#222" stroke-width="1" />
<text x="434.0" y="476.5" font-family='"Liberation Sans", sans-serif' font-size="11" fill="#555" font-weight="normal" text-anchor="start" textLength="24.0" lengthAdjust="spacingAndGlyphs" >2250</text>
<clipPath id="cl2"><rect x="546" y="542" width="47.6" height="12.4"/></clipPath>
<rect x="546.0" y="542.0" width="47.6" height="12.4" fill="#fff" />
<g clip-path="url(#cl2)" fill="none" stroke="#444" stroke-width="0.75"><path d="M550.6,548.2 L548.8,551.3 L545.2,551.3 L543.4,548.2 L545.2,545.1 L548.8,545.1ZM554.0,542.0 L552.2,545.1 L548.6,545.1 L546.8,542.0 L548.6,538.9 L552.2,538.9ZM554.0,554.4 L552.2,557.5 L548.6,557.5 L546.8,554.4 L548.6,551.3 L552.2,551.3ZM557.4,548.2 L555.6,551.3 L552.0,551.3 L550.2,548.2 L552.0,545.1 L555.6,545.1ZM560.8,542.0 L559.0,545.1 L555.4,545.1 L553.6,542.0 L555.4,538.9 L559.0,538.9ZM560.8,554.4 L559.0,557.5 L555.4,557.5 L553.6,554.4 L555.4,551.3 L559.0,551.3ZM564.2,548.2 L562.4,551.3 L558.8,551.3 L557.0,548.2 L558.8,545.1 L562.4,545.1ZM567.6,542.0 L565.8,545.1 L562.2,545.1 L560.4,542.0 L562.2,538.9 L565.8,538.9ZM567.6,554.4 L565.8,557.5 L562.2,557.5 L560.4,554.4 L562.2,551.3 L565.8,551.3ZM571.0,548.2 L569.2,551.3 L565.6,551.3 L563.8,548.2 L565.6,545.1 L569.2,545.1ZM574.4,542.0 L572.6,545.1 L569.0,545.1 L567.2,542.0 L569.0,538.9 L572.6,538.9ZM574.4,554.4 L572.6,557.5 L569.0,557.5 L567.2,554.4 L569.0,551.3 L572.6,551.3ZM577.8,548.2 L576.0,551.3 L572.4,551.3 L570.6,548.2 L572.4,545.1 L576.0,545.1ZM581.2,542.0 L579.4,545.1 L575.8,545.1 L574.0,542.0 L575.8,538.9 L579.4,538.9ZM581.2,554.4 L579.4,557.5 L575.8,557.5 L574.0,554.4 L575.8,551.3 L579.4,551.3ZM584.6,548.2 L582.8,551.3 L579.2,551.3 L577.4,548.2 L579.2,545.1 L582.8,545.1ZM588.0,542.0 L586.2,545.1 L582.6,545.1 L580.8,542.0 L582.6,538.9 L586.2,538.9ZM588.0,554.4 L586.2,557.5 L582.6,557.5 L580.8,554.4 L582.6,551.3 L586.2,551.3ZM591.4,548.2 L589.6,551.3 L586.0,551.3 L584.2,548.2 L586.0,545.1 L589.6,545.1ZM594.8,542.0 L593.0,545.1 L589.4,545.1 L587.6,542.0 L589.4,538.9 L593.0,538.9ZM594.8,554.4 L593.0,557.5 L589.4,557.5 L587.6,554.4 L589.4,551.3 L593.0,551.3ZM598.2,548.2 L596.4,551.3 L592.8,551.3 L591.0,548.2 L592.8,545.1 L596.4,545.1ZM601.6,542.0 L599.8,545.1 L596.2,545.1 L594.4,542.0 L596.2,538.9 L599.8,538.9ZM601.6,554.4 L599.8,557.5 L596.2,557.5 L594.4,554.4 L596.2,551.3 L599.8,551.3Z"/></g>
<rect x="546.0" y="542.0" width="47.6" height="12.4" fill="none" stroke="#222" stroke-width="1" />
<text x="561.0" y="540.0" font-family='"Liberation Sans", sans-serif' font-size="11" fill="#555" font-weight="normal" text-anchor="start" textLength="18.0" lengthAdjust="spacingAndGlyphs" >550</text>
<path d="M593.6,548.4 L611.3,548.4" fill="none" stroke="#505050" stroke-width="1"/>
<rect x="611.3" y="541.3" width="20.6" height="14.2" fill="#fff" stroke="#111" stroke-width="1" />
<rect x="631.9" y="541.3" width="4.6" height="14.2" fill="#111" />
<path d="M613.5,545.7 L629,545.7 L629,551 L613.5,551 Z" fill="none" stroke="#222" stroke-width="1.1"/>
<rect x="615.0" y="547.0" width="3.0" height="2.8" fill="#fff" stroke="#666" stroke-width="0.6" />
<rect x="626.0" y="547.0" width="2.4" height="2.8" fill="#fff" stroke="#666" stroke-width="0.6" />
<text x="613.0" y="538.7" font-family='"Liberation Sans", sans-serif' font-size="7.5" fill="#555" font-weight="normal" text-anchor="start" textLength="19.4" lengthAdjust="spacingAndGlyphs" >XMLA</text>
<rect x="644.4" y="541.3" width="10.7" height="14.4" rx="3" fill="#fff" stroke="#555" stroke-width="1.1"/>
<rect x="646.5" y="543.5" width="6.5" height="10.0" fill="#333" />
<circle cx="648.3" cy="545.5" r="0.9" fill="#fff"/>
<circle cx="651.3" cy="545.5" r="0.9" fill="#fff"/>
<circle cx="648.3" cy="551.5" r="0.9" fill="#fff"/>
<circle cx="651.3" cy="551.5" r="0.9" fill="#fff"/>
<rect x="647.5" y="547.5" width="4.5" height="2.0" fill="#ddd" />
<path d="M655,544 C659,545 659,552 655,553" fill="none" stroke="#111" stroke-width="1.6"/>
<text x="679.0" y="538.4" font-family='"Liberation Sans", sans-serif' font-size="10" fill="#2020c0" font-weight="normal" text-anchor="start" textLength="26.0" lengthAdjust="spacingAndGlyphs" stroke="#2020c0" stroke-width="0.45">XMLA</text>
<ellipse cx="361" cy="283.65" rx="43.6" ry="22.85" fill="none" stroke="#f014f0" stroke-width="3"/>
<ellipse cx="500.9" cy="274.15" rx="43.9" ry="22.55" fill="none" stroke="#f014f0" stroke-width="3"/>
<ellipse cx="505" cy="398.85" rx="43.5" ry="23.35" fill="none" stroke="#f014f0" stroke-width="3"/>
<ellipse cx="510" cy="471.5" rx="42.9" ry="23" fill="none" stroke="#f014f0" stroke-width="3"/>
<line x1="404.1" y1="153.7" x2="423.4" y2="72.1" stroke="#d41414" stroke-width="1.2" />
<line x1="586.9" y1="332.1" x2="654.2" y2="68.7" stroke="#d41414" stroke-width="1.2" />
<line x1="264.8" y1="423.2" x2="62.0" y2="365.4" stroke="#d41414" stroke-width="1.2" />
<line x1="331.8" y1="428.4" x2="28.3" y2="428.4" stroke="#d41414" stroke-width="1.2" />
<line x1="278.7" y1="485.9" x2="134.5" y2="508.5" stroke="#d41414" stroke-width="1.2" />
<line x1="712.8" y1="351.4" x2="895.2" y2="341.0" stroke="#d41414" stroke-width="1.2" />
<line x1="597.1" y1="427.0" x2="643.7" y2="696.9" stroke="#d41414" stroke-width="1.2" />
<line x1="669.0" y1="548.0" x2="698.2" y2="696.9" stroke="#d41414" stroke-width="1.2" />
<circle cx="404.1" cy="153.7" r="2.6" fill="#f0e040" stroke="#f8f0a0" stroke-width="0.8"/>
<circle cx="586.9" cy="332.1" r="2.6" fill="#f0e040" stroke="#f8f0a0" stroke-width="0.8"/>
<circle cx="264.8" cy="423.2" r="2.6" fill="#f0e040" stroke="#f8f0a0" stroke-width="0.8"/>
<circle cx="331.8" cy="428" r="2.6" fill="#f0e040" stroke="#f8f0a0" stroke-width="0.8"/>
<circle cx="278.7" cy="485.9" r="2.6" fill="#f0e040" stroke="#f8f0a0" stroke-width="0.8"/>
<circle cx="712.8" cy="351.4" r="2.6" fill="#f0e040" stroke="#f8f0a0" stroke-width="0.8"/>
<circle cx="597.1" cy="427" r="2.6" fill="#f0e040" stroke="#f8f0a0" stroke-width="0.8"/>
<circle cx="669" cy="548" r="2.6" fill="#f0e040" stroke="#f8f0a0" stroke-width="0.8"/>
<rect x="423.4" y="18.2" width="75.5" height="53.9" fill="none" stroke="#d41414" stroke-width="1.2" />
<line x1="423.4" y1="34.1" x2="498.9" y2="34.1" stroke="#d41414" stroke-width="1.2" />
<line x1="423.4" y1="41.6" x2="498.9" y2="41.6" stroke="#d41414" stroke-width="1.2" />
<line x1="423.4" y1="49.3" x2="498.9" y2="49.3" stroke="#d41414" stroke-width="1.2" />
<line x1="423.4" y1="57.2" x2="498.9" y2="57.2" stroke="#d41414" stroke-width="1.2" />
<line x1="423.4" y1="64.2" x2="498.9" y2="64.2" stroke="#d41414" stroke-width="1.2" />
<line x1="443.3" y1="34.1" x2="443.3" y2="72.1" stroke="#d41414" stroke-width="1.2" />
<line x1="454.7" y1="34.1" x2="454.7" y2="72.1" stroke="#d41414" stroke-width="1.2" />
<line x1="467.8" y1="34.1" x2="467.8" y2="72.1" stroke="#d41414" stroke-width="1.2" />
<text x="426.7" y="32.0" font-family='"Liberation Sans", sans-serif' font-size="15" fill="#33e033" font-weight="normal" text-anchor="start" textLength="36.4" lengthAdjust="spacingAndGlyphs" >XLRA</text>
<text x="424.6" y="39.8" font-family='"Liberation Sans", sans-serif' font-size="6.2" fill="#30ff30" font-weight="bold" text-anchor="start" textLength="17.0" lengthAdjust="spacingAndGlyphs" >Qpv. Nr</text>
<text x="444.5" y="39.8" font-family='"Liberation Sans", sans-serif' font-size="6.2" fill="#30ff30" font-weight="bold" text-anchor="start" textLength="8.0" lengthAdjust="spacingAndGlyphs" >Col.</text>
<text x="455.9" y="39.8" font-family='"Liberation Sans", sans-serif' font-size="6.2" fill="#30ff30" font-weight="bold" text-anchor="start" textLength="9.0" lengthAdjust="spacingAndGlyphs" >Spc.</text>
<text x="469.0" y="39.8" font-family='"Liberation Sans", sans-serif' font-size="6.2" fill="#30ff30" font-weight="bold" text-anchor="start" textLength="27.0" lengthAdjust="spacingAndGlyphs" >Tipo di Cavo</text>
<text x="424.6" y="47.7" font-family='"Liberation Sans", sans-serif' font-size="6.8" fill="#f0f0f0" font-weight="bold" text-anchor="start" textLength="6.0" lengthAdjust="spacingAndGlyphs" >A1</text>
<text x="424.6" y="55.6" font-family='"Liberation Sans", sans-serif' font-size="6.8" fill="#f0f0f0" font-weight="bold" text-anchor="start" textLength="6.0" lengthAdjust="spacingAndGlyphs" >A2</text>
<text x="424.6" y="62.6" font-family='"Liberation Sans", sans-serif' font-size="6.8" fill="#f0f0f0" font-weight="bold" text-anchor="start" textLength="4.0" lengthAdjust="spacingAndGlyphs" >11</text>
<text x="424.6" y="70.5" font-family='"Liberation Sans", sans-serif' font-size="6.8" fill="#f0f0f0" font-weight="bold" text-anchor="start" textLength="5.0" lengthAdjust="spacingAndGlyphs" >14</text>
<text x="444.5" y="70.5" font-family='"Liberation Sans", sans-serif' font-size="6.8" fill="#f0f0f0" font-weight="bold" text-anchor="start" textLength="4.0" lengthAdjust="spacingAndGlyphs" >B</text>
<text x="455.9" y="70.5" font-family='"Liberation Sans", sans-serif' font-size="6.8" fill="#f0f0f0" font-weight="bold" text-anchor="start" textLength="3.0" lengthAdjust="spacingAndGlyphs" >1</text>
<text x="469.0" y="70.5" font-family='"Liberation Sans", sans-serif' font-size="6.8" fill="#f0f0f0" font-weight="bold" text-anchor="start" textLength="17.0" lengthAdjust="spacingAndGlyphs" >1234/05</text>
<rect x="654.2" y="37.2" width="35.7" height="31.5" fill="none" stroke="#d41414" stroke-width="1.2" />
<line x1="654.2" y1="53.3" x2="689.9" y2="53.3" stroke="#d41414" stroke-width="1.2" />
<line x1="654.2" y1="61.3" x2="689.9" y2="61.3" stroke="#d41414" stroke-width="1.2" />
<text x="657.5" y="50.9" font-family='"Liberation Sans", sans-serif' font-size="15" fill="#33e033" font-weight="normal" text-anchor="start" textLength="30.4" lengthAdjust="spacingAndGlyphs" >XSW</text>
<text x="655.4" y="59.5" font-family='"Liberation Sans", sans-serif' font-size="6.2" fill="#30ff30" font-weight="bold" text-anchor="start" textLength="17.0" lengthAdjust="spacingAndGlyphs" >Qpv. Nr</text>
<text x="655.4" y="67.1" font-family='"Liberation Sans", sans-serif' font-size="6.8" fill="#f0f0f0" font-weight="bold" text-anchor="start" textLength="3.0" lengthAdjust="spacingAndGlyphs" >-</text>
<rect x="28.3" y="326.4" width="33.7" height="39.0" fill="none" stroke="#d41414" stroke-width="1.2" />
<line x1="28.3" y1="342.4" x2="62.0" y2="342.4" stroke="#d41414" stroke-width="1.2" />
<line x1="28.3" y1="350.0" x2="62.0" y2="350.0" stroke="#d41414" stroke-width="1.2" />
<line x1="28.3" y1="357.7" x2="62.0" y2="357.7" stroke="#d41414" stroke-width="1.2" />
<text x="31.6" y="340.0" font-family='"Liberation Sans", sans-serif' font-size="15" fill="#33e033" font-weight="normal" text-anchor="start" textLength="29.3" lengthAdjust="spacingAndGlyphs" >XJ17</text>
<text x="29.5" y="348.2" font-family='"Liberation Sans", sans-serif' font-size="6.2" fill="#30ff30" font-weight="bold" text-anchor="start" textLength="17.0" lengthAdjust="spacingAndGlyphs" >Qpv. Nr</text>
<text x="29.5" y="356.1" font-family='"Liberation Sans", sans-serif' font-size="6.8" fill="#f0f0f0" font-weight="bold" text-anchor="start" textLength="2.0" lengthAdjust="spacingAndGlyphs" >1</text>
<text x="29.5" y="363.8" font-family='"Liberation Sans", sans-serif' font-size="6.8" fill="#f0f0f0" font-weight="bold" text-anchor="start" textLength="5.0" lengthAdjust="spacingAndGlyphs" >18</text>
<rect x="28.3" y="389.2" width="31.3" height="39.2" fill="none" stroke="#d41414" stroke-width="1.2" />
<line x1="28.3" y1="404.5" x2="59.6" y2="404.5" stroke="#d41414" stroke-width="1.2" />
<line x1="28.3" y1="412.5" x2="59.6" y2="412.5" stroke="#d41414" stroke-width="1.2" />
<line x1="28.3" y1="420.5" x2="59.6" y2="420.5" stroke="#d41414" stroke-width="1.2" />
<text x="31.6" y="402.2" font-family='"Liberation Sans", sans-serif' font-size="15" fill="#33e033" font-weight="normal" text-anchor="start" textLength="27.0" lengthAdjust="spacingAndGlyphs" >XJ11</text>
<text x="29.5" y="410.7" font-family='"Liberation Sans", sans-serif' font-size="6.2" fill="#30ff30" font-weight="bold" text-anchor="start" textLength="17.0" lengthAdjust="spacingAndGlyphs" >Qpv. Nr</text>
<text x="29.5" y="418.9" font-family='"Liberation Sans", sans-serif' font-size="6.8" fill="#f0f0f0" font-weight="bold" text-anchor="start" textLength="3.0" lengthAdjust="spacingAndGlyphs" >8</text>
<text x="29.5" y="426.8" font-family='"Liberation Sans", sans-serif' font-size="6.8" fill="#f0f0f0" font-weight="bold" text-anchor="start" textLength="5.0" lengthAdjust="spacingAndGlyphs" >12</text>
<rect x="33.2" y="461.2" width="101.3" height="47.5" fill="none" stroke="#d41414" stroke-width="1.2" />
<line x1="33.2" y1="477.1" x2="134.5" y2="477.1" stroke="#d41414" stroke-width="1.2" />
<line x1="33.2" y1="484.1" x2="134.5" y2="484.1" stroke="#d41414" stroke-width="1.2" />
<line x1="33.2" y1="492.2" x2="134.5" y2="492.2" stroke="#d41414" stroke-width="1.2" />
<line x1="33.2" y1="500.5" x2="134.5" y2="500.5" stroke="#d41414" stroke-width="1.2" />
<line x1="53.0" y1="477.1" x2="53.0" y2="508.7" stroke="#d41414" stroke-width="1.2" />
<line x1="65.0" y1="477.1" x2="65.0" y2="508.7" stroke="#d41414" stroke-width="1.2" />
<line x1="77.8" y1="477.1" x2="77.8" y2="508.7" stroke="#d41414" stroke-width="1.2" />
<line x1="107.2" y1="477.1" x2="107.2" y2="508.7" stroke="#d41414" stroke-width="1.2" />
<text x="36.5" y="475.0" font-family='"Liberation Sans", sans-serif' font-size="15" fill="#33e033" font-weight="normal" text-anchor="start" textLength="26.6" lengthAdjust="spacingAndGlyphs" >XLA</text>
<text x="34.4" y="482.3" font-family='"Liberation Sans", sans-serif' font-size="6.2" fill="#30ff30" font-weight="bold" text-anchor="start" textLength="17.0" lengthAdjust="spacingAndGlyphs" >Qpv. Nr</text>
<text x="54.2" y="482.3" font-family='"Liberation Sans", sans-serif' font-size="6.2" fill="#30ff30" font-weight="bold" text-anchor="start" textLength="9.0" lengthAdjust="spacingAndGlyphs" >Col.</text>
<text x="66.2" y="482.3" font-family='"Liberation Sans", sans-serif' font-size="6.2" fill="#30ff30" font-weight="bold" text-anchor="start" textLength="9.0" lengthAdjust="spacingAndGlyphs" >Sez.</text>
<text x="79.0" y="482.3" font-family='"Liberation Sans", sans-serif' font-size="6.2" fill="#30ff30" font-weight="bold" text-anchor="start" textLength="26.0" lengthAdjust="spacingAndGlyphs" >Tipo di term</text>
<text x="108.4" y="482.3" font-family='"Liberation Sans", sans-serif' font-size="6.2" fill="#30ff30" font-weight="bold" text-anchor="start" textLength="14.0" lengthAdjust="spacingAndGlyphs" >Term</text>
<text x="34.4" y="490.6" font-family='"Liberation Sans", sans-serif' font-size="6.8" fill="#f0f0f0" font-weight="bold" text-anchor="start" textLength="3.0" lengthAdjust="spacingAndGlyphs" >1</text>
<text x="54.2" y="490.6" font-family='"Liberation Sans", sans-serif' font-size="6.8" fill="#f0f0f0" font-weight="bold" text-anchor="start" textLength="4.0" lengthAdjust="spacingAndGlyphs" >L</text>
<text x="79.0" y="490.6" font-family='"Liberation Sans", sans-serif' font-size="6.8" fill="#f0f0f0" font-weight="bold" text-anchor="start" textLength="24.0" lengthAdjust="spacingAndGlyphs" >1234/044</text>
<text x="108.4" y="490.6" font-family='"Liberation Sans", sans-serif' font-size="6.8" fill="#f0f0f0" font-weight="bold" text-anchor="start" textLength="24.0" lengthAdjust="spacingAndGlyphs" >XT000029</text>
<text x="34.4" y="498.9" font-family='"Liberation Sans", sans-serif' font-size="6.8" fill="#f0f0f0" font-weight="bold" text-anchor="start" textLength="3.0" lengthAdjust="spacingAndGlyphs" >2</text>
<text x="54.2" y="498.9" font-family='"Liberation Sans", sans-serif' font-size="6.8" fill="#f0f0f0" font-weight="bold" text-anchor="start" textLength="4.0" lengthAdjust="spacingAndGlyphs" >B</text>
<text x="79.0" y="498.9" font-family='"Liberation Sans", sans-serif' font-size="6.8" fill="#f0f0f0" font-weight="bold" text-anchor="start" textLength="21.0" lengthAdjust="spacingAndGlyphs" >1224185</text>
<text x="108.4" y="498.9" font-family='"Liberation Sans", sans-serif' font-size="6.8" fill="#f0f0f0" font-weight="bold" text-anchor="start" textLength="24.0" lengthAdjust="spacingAndGlyphs" >XT000027</text>
<text x="34.4" y="507.1" font-family='"Liberation Sans", sans-serif' font-size="6.8" fill="#f0f0f0" font-weight="bold" text-anchor="start" textLength="3.0" lengthAdjust="spacingAndGlyphs" >0</text>
<rect x="895.2" y="340.8" width="21.8" height="38.7" fill="none" stroke="#d41414" stroke-width="1.2" />
<line x1="895.2" y1="356.0" x2="917.0" y2="356.0" stroke="#d41414" stroke-width="1.2" />
<line x1="895.2" y1="364.3" x2="917.0" y2="364.3" stroke="#d41414" stroke-width="1.2" />
<line x1="895.2" y1="372.1" x2="917.0" y2="372.1" stroke="#d41414" stroke-width="1.2" />
<text x="898.5" y="354.8" font-family='"Liberation Sans", sans-serif' font-size="15" fill="#33e033" font-weight="normal" text-anchor="start" textLength="16.7" lengthAdjust="spacingAndGlyphs" >XF</text>
<text x="896.4" y="362.5" font-family='"Liberation Sans", sans-serif' font-size="6.2" fill="#30ff30" font-weight="bold" text-anchor="start" textLength="17.0" lengthAdjust="spacingAndGlyphs" >Qpv. Nr</text>
<text x="896.4" y="370.5" font-family='"Liberation Sans", sans-serif' font-size="6.8" fill="#f0f0f0" font-weight="bold" text-anchor="start" textLength="3.0" lengthAdjust="spacingAndGlyphs" >5</text>
<text x="896.4" y="377.9" font-family='"Liberation Sans", sans-serif' font-size="6.8" fill="#f0f0f0" font-weight="bold" text-anchor="start" textLength="5.0" lengthAdjust="spacingAndGlyphs" >13</text>
<rect x="544.3" y="696.9" width="99.4" height="32.3" fill="none" stroke="#d41414" stroke-width="1.2" />
<line x1="544.3" y1="712.8" x2="643.7" y2="712.8" stroke="#d41414" stroke-width="1.2" />
<line x1="544.3" y1="721.1" x2="643.7" y2="721.1" stroke="#d41414" stroke-width="1.2" />
<line x1="563.4" y1="712.8" x2="563.4" y2="729.2" stroke="#d41414" stroke-width="1.2" />
<line x1="575.3" y1="712.8" x2="575.3" y2="729.2" stroke="#d41414" stroke-width="1.2" />
<line x1="588.3" y1="712.8" x2="588.3" y2="729.2" stroke="#d41414" stroke-width="1.2" />
<line x1="618.4" y1="712.8" x2="618.4" y2="729.2" stroke="#d41414" stroke-width="1.2" />
<text x="547.6" y="711.0" font-family='"Liberation Sans", sans-serif' font-size="15" fill="#33e033" font-weight="normal" text-anchor="start" textLength="31.6" lengthAdjust="spacingAndGlyphs" >XISO</text>
<text x="545.5" y="719.3" font-family='"Liberation Sans", sans-serif' font-size="6.2" fill="#30ff30" font-weight="bold" text-anchor="start" textLength="17.0" lengthAdjust="spacingAndGlyphs" >Qpv. Nr</text>
<text x="564.6" y="719.3" font-family='"Liberation Sans", sans-serif' font-size="6.2" fill="#30ff30" font-weight="bold" text-anchor="start" textLength="9.0" lengthAdjust="spacingAndGlyphs" >Col.</text>
<text x="576.5" y="719.3" font-family='"Liberation Sans", sans-serif' font-size="6.2" fill="#30ff30" font-weight="bold" text-anchor="start" textLength="9.0" lengthAdjust="spacingAndGlyphs" >Spc.</text>
<text x="589.5" y="719.3" font-family='"Liberation Sans", sans-serif' font-size="6.2" fill="#30ff30" font-weight="bold" text-anchor="start" textLength="27.0" lengthAdjust="spacingAndGlyphs" >Tipo di term</text>
<text x="619.6" y="719.3" font-family='"Liberation Sans", sans-serif' font-size="6.2" fill="#30ff30" font-weight="bold" text-anchor="start" textLength="14.0" lengthAdjust="spacingAndGlyphs" >Term.</text>
<text x="545.5" y="727.6" font-family='"Liberation Sans", sans-serif' font-size="6.8" fill="#f0f0f0" font-weight="bold" text-anchor="start" textLength="3.0" lengthAdjust="spacingAndGlyphs" >-</text>
<text x="564.6" y="727.6" font-family='"Liberation Sans", sans-serif' font-size="6.8" fill="#f0f0f0" font-weight="bold" text-anchor="start" textLength="4.0" lengthAdjust="spacingAndGlyphs" >L</text>
<text x="576.5" y="727.6" font-family='"Liberation Sans", sans-serif' font-size="6.8" fill="#f0f0f0" font-weight="bold" text-anchor="start" textLength="3.0" lengthAdjust="spacingAndGlyphs" >1</text>
<text x="589.5" y="727.6" font-family='"Liberation Sans", sans-serif' font-size="6.8" fill="#f0f0f0" font-weight="bold" text-anchor="start" textLength="19.0" lengthAdjust="spacingAndGlyphs" >1234/044</text>
<text x="619.6" y="727.6" font-family='"Liberation Sans", sans-serif' font-size="6.8" fill="#f0f0f0" font-weight="bold" text-anchor="start" textLength="21.0" lengthAdjust="spacingAndGlyphs" >XT000029</text>
<rect x="698.2" y="696.9" width="41.4" height="47.3" fill="none" stroke="#d41414" stroke-width="1.2" />
<line x1="698.2" y1="712.8" x2="739.6" y2="712.8" stroke="#d41414" stroke-width="1.2" />
<line x1="698.2" y1="721.5" x2="739.6" y2="721.5" stroke="#d41414" stroke-width="1.2" />
<line x1="698.2" y1="729.2" x2="739.6" y2="729.2" stroke="#d41414" stroke-width="1.2" />
<line x1="698.2" y1="737.0" x2="739.6" y2="737.0" stroke="#d41414" stroke-width="1.2" />
<text x="701.5" y="711.0" font-family='"Liberation Sans", sans-serif' font-size="15" fill="#33e033" font-weight="normal" text-anchor="start" textLength="38.2" lengthAdjust="spacingAndGlyphs" >XMLA</text>
<text x="699.4" y="719.7" font-family='"Liberation Sans", sans-serif' font-size="6.2" fill="#30ff30" font-weight="bold" text-anchor="start" textLength="17.0" lengthAdjust="spacingAndGlyphs" >Qpv. Nr</text>
<text x="699.4" y="727.6" font-family='"Liberation Sans", sans-serif' font-size="6.8" fill="#f0f0f0" font-weight="bold" text-anchor="start" textLength="3.0" lengthAdjust="spacingAndGlyphs" >1</text>
<text x="699.4" y="735.4" font-family='"Liberation Sans", sans-serif' font-size="6.8" fill="#f0f0f0" font-weight="bold" text-anchor="start" textLength="3.0" lengthAdjust="spacingAndGlyphs" >2</text>
<text x="699.4" y="742.6" font-family='"Liberation Sans", sans-serif' font-size="6.8" fill="#f0f0f0" font-weight="bold" text-anchor="start" textLength="3.0" lengthAdjust="spacingAndGlyphs" >3</text>
<rect x="905.0" y="42.4" width="55.0" height="121.2" fill="none" stroke="#30c0c8" stroke-width="1.2" />
<line x1="924.4" y1="42.4" x2="924.4" y2="163.6" stroke="#30c0c8" stroke-width="1.2" />
<line x1="905.0" y1="57.0" x2="960.0" y2="57.0" stroke="#30c0c8" stroke-width="1.2" />
<line x1="905.0" y1="70.0" x2="960.0" y2="70.0" stroke="#30c0c8" stroke-width="1.2" />
<line x1="905.0" y1="83.6" x2="960.0" y2="83.6" stroke="#30c0c8" stroke-width="1.2" />
<line x1="905.0" y1="97.0" x2="960.0" y2="97.0" stroke="#30c0c8" stroke-width="1.2" />
<line x1="905.0" y1="110.4" x2="960.0" y2="110.4" stroke="#30c0c8" stroke-width="1.2" />
<line x1="905.0" y1="123.6" x2="960.0" y2="123.6" stroke="#30c0c8" stroke-width="1.2" />
<line x1="905.0" y1="137.0" x2="960.0" y2="137.0" stroke="#30c0c8" stroke-width="1.2" />
<line x1="905.0" y1="150.4" x2="960.0" y2="150.4" stroke="#30c0c8" stroke-width="1.2" />
<text x="907.5" y="54.5" font-family='"Liberation Sans", sans-serif' font-size="11" fill="#e8e050" font-weight="normal" text-anchor="start" textLength="15.5" lengthAdjust="spacingAndGlyphs" >Pos</text>
<text x="926.0" y="54.5" font-family='"Liberation Sans", sans-serif' font-size="11" fill="#e8e050" font-weight="normal" text-anchor="start" >Co</text>
<text x="926.0" y="67.5" font-family='"Liberation Sans", sans-serif' font-size="11" fill="#f0f0f0" font-weight="normal" text-anchor="start" >127</text>
<text x="926.0" y="81.0" font-family='"Liberation Sans", sans-serif' font-size="11" fill="#f0f0f0" font-weight="normal" text-anchor="start" >124</text>
<text x="926.0" y="94.5" font-family='"Liberation Sans", sans-serif' font-size="11" fill="#f0f0f0" font-weight="normal" text-anchor="start" >GD</text>
<text x="926.0" y="108.0" font-family='"Liberation Sans", sans-serif' font-size="11" fill="#f0f0f0" font-weight="normal" text-anchor="start" >XA</text>
<text x="926.0" y="121.5" font-family='"Liberation Sans", sans-serif' font-size="11" fill="#f0f0f0" font-weight="normal" text-anchor="start" >XC</text>
<text x="926.0" y="135.0" font-family='"Liberation Sans", sans-serif' font-size="11" fill="#f0f0f0" font-weight="normal" text-anchor="start" >XC</text>
<text x="926.0" y="148.0" font-family='"Liberation Sans", sans-serif' font-size="11" fill="#f0f0f0" font-weight="normal" text-anchor="start" >XT</text>
<text x="926.0" y="161.5" font-family='"Liberation Sans", sans-serif' font-size="11" fill="#f0f0f0" font-weight="normal" text-anchor="start" >XT</text>
<path d="M1757,19 Q1775,8 1797,6" fill="none" stroke="#3a3a3a" stroke-width="1.5"/>
<text x="1784.5" y="18.0" font-family='"Liberation Sans", sans-serif' font-size="19" fill="#9a9a9a" font-weight="bold" text-anchor="start" >N</text>
<rect x="1790.0" y="39.8" width="7.0" height="39.7" fill="#b4b4b4" />
<text x="1789.5" y="72.0" font-family='"Liberation Sans", sans-serif' font-size="10" fill="#505050" font-weight="normal" text-anchor="start" >LT</text>
<text x="1787.0" y="131.0" font-family='"Liberation Sans", sans-serif' font-size="19" fill="#9a9a9a" font-weight="bold" text-anchor="start" >S</text>
<rect x="1790.0" y="154.0" width="7.0" height="12.0" fill="#a0a0a0" />
<text x="1791.0" y="164.0" font-family='"Liberation Sans", sans-serif' font-size="10" fill="#444" font-weight="normal" text-anchor="start" >S</text></svg>
<div class="dlg"></div>
<div class="title"></div>
<div class="t ttl" style="left:945.0px;top:34.7px;">Cabling Virtual - Definisci Percorsi virtuali dal disegno</div>
<svg class="abs" style="left:1769px;top:35px" width="12" height="12"><path d="M1,1 L11,11 M11,1 L1,11" stroke="#222" stroke-width="1.1"/></svg>
<div class="hdr" style="left:944.4px;top:60.4px;width:368.3px;height:14.2px"></div>
<div class="t" style="left:947.0px;top:60.7px;">Sigla 1</div>
<div class="t" style="left:1035.0px;top:60.7px;">Lunghezza</div>
<div class="t" style="left:1123.0px;top:60.7px;">Codice Percorso</div>
<div class="t" style="left:1214.4px;top:60.7px;">Sigla 2</div>
<div class="lst" style="left:944.4px;top:81.5px;width:368.3px;height:455.9px"></div>
<div class="sel" style="left:945.4px;top:82.0px;width:366.3px;height:13.0px"></div>
<div class="tw" style="left:947.0px;top:81.6px;">XJ17</div>
<div class="tw" style="left:1035.0px;top:81.6px;">50</div>
<div class="tw" style="left:1123.0px;top:81.6px;">XG000001</div>
<div class="tw" style="left:1214.4px;top:81.6px;">*D1</div>
<div class="t" style="left:947.0px;top:94.6px;">XJ11</div>
<div class="t" style="left:1035.0px;top:94.6px;">50</div>
<div class="t" style="left:1123.0px;top:94.6px;">XG000001</div>
<div class="t" style="left:1214.4px;top:94.6px;">*D1</div>
<div class="t" style="left:947.0px;top:107.6px;">XLRA</div>
<div class="t" style="left:1035.0px;top:107.6px;">50</div>
<div class="t" style="left:1123.0px;top:107.6px;">XG000001</div>
<div class="t" style="left:1214.4px;top:107.6px;">*D1</div>
<div class="t" style="left:947.0px;top:120.6px;">*D1</div>
<div class="t" style="left:1035.0px;top:120.6px;">150</div>
<div class="t" style="left:1123.0px;top:120.6px;">XG000001</div>
<div class="t" style="left:1214.4px;top:120.6px;">*D2</div>
<div class="t" style="left:947.0px;top:133.6px;">*D2</div>
<div class="t" style="left:1035.0px;top:133.6px;">50</div>
<div class="t" style="left:1214.4px;top:133.6px;">XSW</div>
<div class="t" style="left:947.0px;top:146.6px;">*D2</div>
<div class="t" style="left:1035.0px;top:146.6px;">150</div>
<div class="t" style="left:1123.0px;top:146.6px;">XG000001</div>
<div class="t" style="left:1214.4px;top:146.6px;">*D3</div>
<div class="t" style="left:947.0px;top:159.6px;">XISO</div>
<div class="t" style="left:1035.0px;top:159.6px;">50</div>
<div class="t" style="left:1214.4px;top:159.6px;">*D3</div>
<div class="t" style="left:947.0px;top:172.6px;">*D4</div>
<div class="t" style="left:1035.0px;top:172.6px;">50</div>
<div class="t" style="left:1214.4px;top:172.6px;">*D3</div>
<div class="t" style="left:947.0px;top:185.6px;">*D4</div>
<div class="t" style="left:1035.0px;top:185.6px;">2250</div>
<div class="t" style="left:1123.0px;top:185.6px;">XG000002</div>
<div class="t" style="left:1214.4px;top:185.6px;">XLA</div>
<div class="t" style="left:947.0px;top:198.6px;">*D4</div>
<div class="t" style="left:1035.0px;top:198.6px;">550</div>
<div class="t" style="left:1123.0px;top:198.6px;">XG000002</div>
<div class="t" style="left:1214.4px;top:198.6px;">XMLA</div>
<div class="t" style="left:947.0px;top:211.6px;">*D4</div>
<div class="t" style="left:1035.0px;top:211.6px;">250</div>
<div class="t" style="left:1123.0px;top:211.6px;">XG000001</div>
<div class="t" style="left:1214.4px;top:211.6px;">XF</div>
<div class="hdr" style="left:1321.3px;top:60.4px;width:462.5px;height:14.2px"></div>
<div class="t" style="left:1324.0px;top:60.7px;">Sigla 1 Gruppo</div>
<div class="t" style="left:1411.0px;top:60.7px;">Categoria</div>
<div class="t" style="left:1501.0px;top:60.7px;">Funzione</div>
<div class="t" style="left:1742.0px;top:60.7px;">Usato</div>
<div class="lst" style="left:1321.3px;top:81.5px;width:462.5px;height:182.5px"></div>
<div class="sel" style="left:1322.3px;top:82.0px;width:460.5px;height:13.0px"></div>
<div class="tw" style="left:1324.0px;top:81.6px;">XJ17</div>
<div class="tw" style="left:1411.0px;top:81.6px;">Gruppo libero</div>
<div class="tw" style="left:1742.0px;top:81.6px;">1</div>
<div class="t" style="left:1324.0px;top:94.6px;">XJ11</div>
<div class="t" style="left:1411.0px;top:94.6px;">Gruppo libero</div>
<div class="t" style="left:1742.0px;top:94.6px;">1</div>
<div class="t" style="left:1324.0px;top:107.6px;">XLRA</div>
<div class="t" style="left:1411.0px;top:107.6px;">Gruppo libero</div>
<div class="t" style="left:1742.0px;top:107.6px;">1</div>
<div class="t" style="left:1324.0px;top:120.6px;">XSW</div>
<div class="t" style="left:1411.0px;top:120.6px;">Terminale</div>
<div class="t" style="left:1742.0px;top:120.6px;">1</div>
<div class="t" style="left:1324.0px;top:133.6px;">XISO</div>
<div class="t" style="left:1411.0px;top:133.6px;">Terminale</div>
<div class="t" style="left:1742.0px;top:133.6px;">1</div>
<div class="t" style="left:1324.0px;top:146.6px;">XF</div>
<div class="t" style="left:1411.0px;top:146.6px;">Gruppo libero</div>
<div class="t" style="left:1742.0px;top:146.6px;">1</div>
<div class="t" style="left:1324.0px;top:159.6px;">XLA</div>
<div class="t" style="left:1411.0px;top:159.6px;">Connettore</div>
<div class="t" style="left:1742.0px;top:159.6px;">1</div>
<div class="t" style="left:1324.0px;top:172.6px;">XMLA</div>
<div class="t" style="left:1411.0px;top:172.6px;">Connettore</div>
<div class="t" style="left:1742.0px;top:172.6px;">1</div>
<div class="t" style="left:1324.0px;top:185.6px;">*D4</div>
<div class="t" style="left:1411.0px;top:185.6px;">Diramazione</div>
<div class="t" style="left:1742.0px;top:185.6px;">4</div>
<div class="t" style="left:1324.0px;top:198.6px;">*D3</div>
<div class="t" style="left:1411.0px;top:198.6px;">Diramazione</div>
<div class="t" style="left:1742.0px;top:198.6px;">3</div>
<div class="t" style="left:1324.0px;top:211.6px;">*D2</div>
<div class="t" style="left:1411.0px;top:211.6px;">Diramazione</div>
<div class="t" style="left:1742.0px;top:211.6px;">3</div>
<div class="t" style="left:1324.0px;top:224.6px;">*D1</div>
<div class="t" style="left:1411.0px;top:224.6px;">Diramazione</div>
<div class="t" style="left:1742.0px;top:224.6px;">4</div>
<div class="hdr" style="left:1321.3px;top:272.0px;width:462.5px;height:13.6px"></div>
<div class="t" style="left:1323.0px;top:271.7px;">Codice</div>
<div class="t" style="left:1411.0px;top:271.7px;">Costruttore</div>
<div class="t" style="left:1500.0px;top:271.7px;">Codice Cost.</div>
<div class="t" style="left:1591.0px;top:271.7px;">Descrizione</div>
<div class="hdr" style="left:1321.3px;top:292.1px;width:462.5px;height:14.1px"></div>
<div class="grp" style="left:1321.5px;top:332.8px;width:306.1px;height:40.5px"></div>
<div class="t lbl" style="left:1328.5px;top:327.0px;">Percorso</div>
<div class="btn" style="left:1331.4px;top:349.5px;width:126.0px;height:18.7px"><span>&lt;&lt;&lt; Aggiungi/Modifica</span></div>
<div class="t" style="left:1473.2px;top:354.5px;">Lunghezza (mm)</div>
<div class="edit" style="left:1557.2px;top:351.1px;width:60.8px;height:18.4px"></div>
<div class="t" style="left:1559.0px;top:353.5px;">50</div>
<div class="grp" style="left:1636.3px;top:332.8px;width:147.4px;height:40.5px"></div>
<div class="t lbl" style="left:1643.5px;top:327.0px;">Diramazione virtuale</div>
<div class="edit" style="left:1645.0px;top:351.1px;width:68.0px;height:18.4px"></div>
<div class="btn" style="left:1722.3px;top:349.6px;width:51.1px;height:18.7px"><span>Add</span></div>
<div class="hdr" style="left:1321.3px;top:393.5px;width:462.5px;height:14.0px"></div>
<div class="t" style="left:1324.0px;top:393.6px;">Sigla 2 Gruppo</div>
<div class="t" style="left:1411.0px;top:393.6px;">Categoria</div>
<div class="t" style="left:1501.0px;top:393.6px;">Funzione</div>
<div class="t" style="left:1742.0px;top:393.6px;">Usato</div>
<div class="lst" style="left:1321.3px;top:414.5px;width:462.5px;height:182.9px"></div>
<div class="t" style="left:1324.0px;top:414.6px;">XJ17</div>
<div class="t" style="left:1411.0px;top:414.6px;">Gruppo libero</div>
<div class="t" style="left:1742.0px;top:414.6px;">1</div>
<div class="t" style="left:1324.0px;top:427.6px;">XJ11</div>
<div class="t" style="left:1411.0px;top:427.6px;">Gruppo libero</div>
<div class="t" style="left:1742.0px;top:427.6px;">1</div>
<div class="t" style="left:1324.0px;top:440.6px;">XLRA</div>
<div class="t" style="left:1411.0px;top:440.6px;">Gruppo libero</div>
<div class="t" style="left:1742.0px;top:440.6px;">1</div>
<div class="t" style="left:1324.0px;top:453.6px;">XSW</div>
<div class="t" style="left:1411.0px;top:453.6px;">Terminale</div>
<div class="t" style="left:1742.0px;top:453.6px;">1</div>
<div class="t" style="left:1324.0px;top:466.6px;">XISO</div>
<div class="t" style="left:1411.0px;top:466.6px;">Terminale</div>
<div class="t" style="left:1742.0px;top:466.6px;">1</div>
<div class="t" style="left:1324.0px;top:479.6px;">XF</div>
<div class="t" style="left:1411.0px;top:479.6px;">Gruppo libero</div>
<div class="t" style="left:1742.0px;top:479.6px;">1</div>
<div class="t" style="left:1324.0px;top:492.6px;">XLA</div>
<div class="t" style="left:1411.0px;top:492.6px;">Connettore</div>
<div class="t" style="left:1742.0px;top:492.6px;">1</div>
<div class="t" style="left:1324.0px;top:505.6px;">XMLA</div>
<div class="t" style="left:1411.0px;top:505.6px;">Connettore</div>
<div class="t" style="left:1742.0px;top:505.6px;">1</div>
<div class="t" style="left:1324.0px;top:518.6px;">*D4</div>
<div class="t" style="left:1411.0px;top:518.6px;">Diramazione</div>
<div class="t" style="left:1742.0px;top:518.6px;">4</div>
<div class="t" style="left:1324.0px;top:531.6px;">*D3</div>
<div class="t" style="left:1411.0px;top:531.6px;">Diramazione</div>
<div class="t" style="left:1742.0px;top:531.6px;">3</div>
<div class="t" style="left:1324.0px;top:544.6px;">*D2</div>
<div class="t" style="left:1411.0px;top:544.6px;">Diramazione</div>
<div class="t" style="left:1742.0px;top:544.6px;">3</div>
<div class="sel" style="left:1322.3px;top:558.0px;width:460.5px;height:13.0px"></div>
<div class="tw" style="left:1324.0px;top:557.6px;">*D1</div>
<div class="tw" style="left:1411.0px;top:557.6px;">Diramazione</div>
<div class="tw" style="left:1742.0px;top:557.6px;">4</div>
<div class="hdr" style="left:1321.3px;top:604.4px;width:462.5px;height:13.9px"></div>
<div class="t" style="left:1323.0px;top:604.4px;">Codice</div>
<div class="t" style="left:1411.0px;top:604.4px;">Costruttore</div>
<div class="t" style="left:1500.0px;top:604.4px;">Codice Cost.</div>
<div class="t" style="left:1591.0px;top:604.4px;">Descrizione</div>
<div class="hdr" style="left:1321.3px;top:625.6px;width:462.5px;height:13.9px"></div>
<div class="btn" style="left:945.7px;top:546.7px;width:176.8px;height:18.7px"><span>Cancella Percorso</span></div>
<div class="btn" style="left:1133.7px;top:546.7px;width:177.9px;height:18.7px"><span>Cancella Materiale</span></div>
<div class="grp" style="left:944.7px;top:578.9px;width:367.6px;height:68.6px"></div>
<div class="t lbl" style="left:951.5px;top:573.3px;">Materiale Percorso</div>
<div class="hdr" style="left:953.3px;top:593.5px;width:269.3px;height:14.0px"></div>
<div class="t" style="left:955.0px;top:593.6px;">Codice</div>
<div class="t" style="left:1043.0px;top:593.6px;">Costruttore</div>
<div class="t" style="left:1132.0px;top:593.6px;">Codice Cost.</div>
<div class="hdr" style="left:953.3px;top:614.4px;width:269.3px;height:14.0px"></div>
<div class="t" style="left:956.0px;top:614.5px;">XG000001</div>
<div class="t" style="left:1044.0px;top:614.5px;">SCHLEMMER</div>
<div class="t" style="left:1133.0px;top:614.5px;">1926770</div>
<div class="t" style="left:949.0px;top:632.7px;">TCA PP-MOD NERO D:4.5MM -40°C/+135°C</div>
<div class="btn" style="left:1232.2px;top:595.3px;width:69.3px;height:18.7px"><span>Scegli</span></div>
<div class="btn" style="left:1232.2px;top:623.4px;width:69.3px;height:19.3px"><span>Applica</span></div>
<div class="redl"></div>
<div class="btn" style="left:1153.4px;top:674.6px;width:69.2px;height:18.8px"><span>Vedi</span></div>
<div class="btn" style="left:1233.0px;top:674.6px;width:69.5px;height:18.8px"><span>Segna</span></div>
<div class="btn def" style="left:1621.4px;top:674.3px;width:81.2px;height:19.2px"><span>Salva</span></div>
<div class="btn" style="left:1713.5px;top:674.3px;width:68.8px;height:19.2px"><span>Fine</span></div>
<svg class="abs" style="left:940px;top:660px" width="160" height="50" viewBox="940 660 160 50">
<path d="M971.2,677 C969,673.5 965,671.1 959.5,671.1 C951.5,671.1 947,677.5 947,686 C947,694.5 951.5,701 959.5,701 C965,701 969,698.5 971.2,695 L965.5,692 C964.2,694 962.2,695.2 959.5,695.2 C955,695.2 953,691 953,686 C953,681 955,676.9 959.5,676.9 C962.2,676.9 964.2,678 965.5,680 Z" fill="#26304f"/>
<path d="M980.8,671 L983.2,671 L985.3,675 L976.3,692.7 L970.4,692.7 Z" fill="#d5122b"/>
<path d="M986.1,677.6 L993.9,692.7 L978.1,692.7 L980.8,688.2 L985.6,688.2 Z" fill="#d5122b"/>
<path d="M996,671.1 L1009,671.1 C1013.5,671.1 1014.8,674 1014.8,676.5 C1014.8,678.5 1013.8,680.5 1012,681.3 C1014,682 1015,684 1015,686.5 C1015,690 1013,692.5 1008.5,692.5 L996,692.5 Z M1001.5,675.5 L1001.5,679.5 L1008,679.5 C1009.2,679.5 1009.6,678.5 1009.6,677.5 C1009.6,676.5 1009.2,675.5 1008,675.5 Z M1001.5,683.5 L1001.5,688 L1008.5,688 C1009.6,688 1010,687 1010,685.8 C1010,684.6 1009.6,683.5 1008.5,683.5 Z" fill="#26304f" fill-rule="evenodd"/>
<path d="M1016.6,671.1 L1022,671.1 L1022,687.6 L1034.6,687.6 L1034.6,692.5 L1016.6,692.5 Z" fill="#26304f"/>
<path d="M1037.5,671.1 L1043.3,671.1 L1043.3,692.5 L1037.5,692.5 Z" fill="#26304f"/>
<path d="M1045.5,671.1 L1050.5,671.1 L1060.5,684 L1060.5,671.1 L1065.6,671.1 L1065.6,692.5 L1060.8,692.5 L1050.7,679.5 L1050.7,692.5 L1045.5,692.5 Z" fill="#26304f"/>
<path d="M1090,676.5 L1090,671.1 L1076,671.1 C1070.5,671.1 1068.2,675.5 1068.2,681.8 C1068.2,688 1070.5,692.5 1076,692.5 L1090,692.5 L1090,680.5 L1079,680.5 L1079,685 L1084.5,685 L1084.5,687.8 L1077,687.8 C1074.5,687.8 1073.5,685.5 1073.5,681.8 C1073.5,678 1074.5,676.5 1077,676.5 Z" fill="#26304f"/>
<path d="M967,697.2 L1090,697.2 L1090,700.8 L964.5,700.8 Z" fill="#d5122b"/>
</svg>
</body></html>
